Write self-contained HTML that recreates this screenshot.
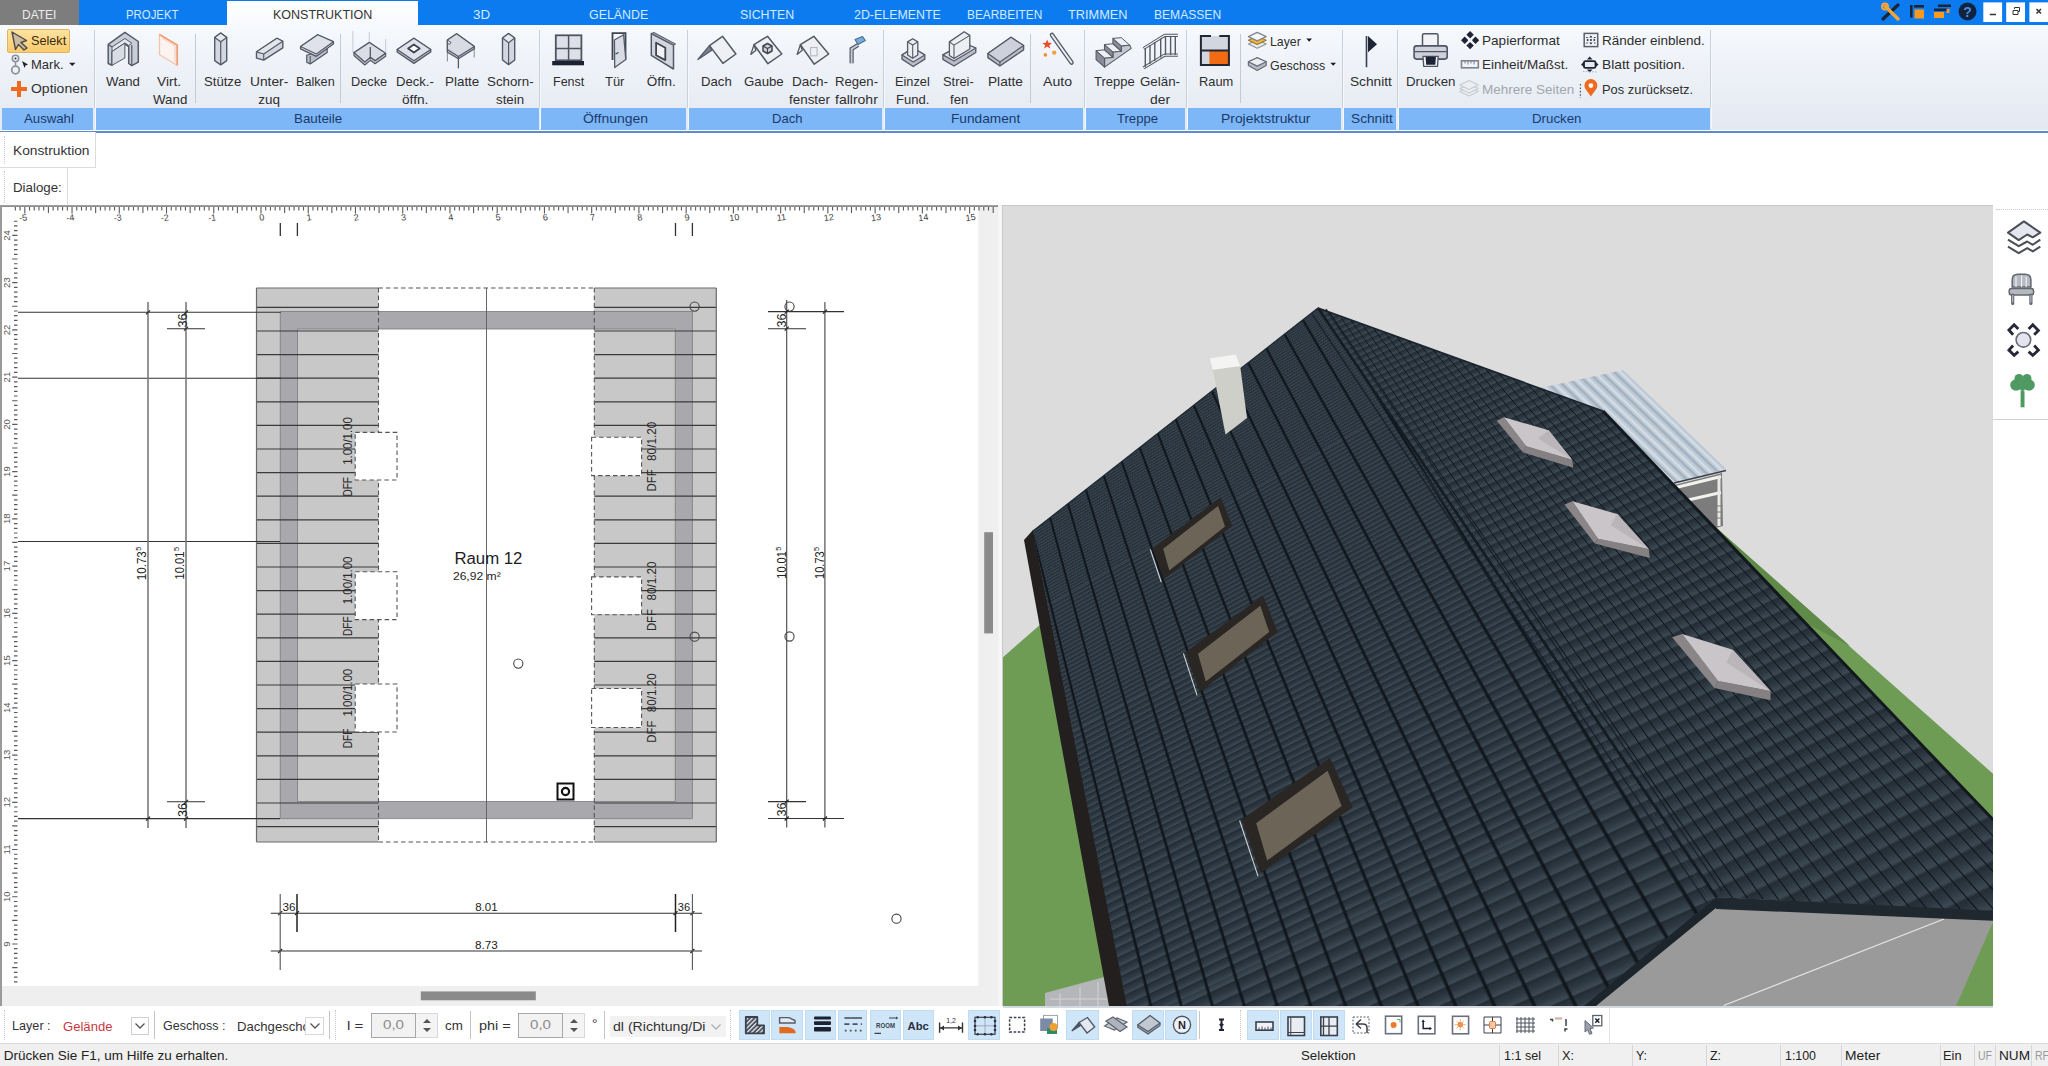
<!DOCTYPE html>
<html><head><meta charset="utf-8"><title>Konstruktion</title>
<style>
html,body{margin:0;padding:0;}
body{width:2048px;height:1066px;overflow:hidden;position:relative;background:#fff;font-family:"Liberation Sans",sans-serif;}
.abs{position:absolute;}
.t{position:absolute;white-space:nowrap;transform-origin:0 0;}
svg text{font-family:"Liberation Sans",sans-serif;}
</style></head><body>

<div class="abs" style="left:0;top:25px;width:2048px;height:105px;background:linear-gradient(#f6f9fd 0%,#eef2f8 40%,#e3e9f2 100%)"></div>
<div class="abs" style="left:0;top:130.5px;width:2048px;height:2px;background:#5b8dcc"></div>
<div class="abs" style="left:2.0px;top:108.3px;width:91.0px;height:22.2px;background:#7db7f8"></div>
<div class="t" style="left:24.25px;top:111.57px;font-size:13.5px;line-height:13.5px;color:#1a3a6a;transform:scaleX(0.9779);">Auswahl</div>
<div class="abs" style="left:96.0px;top:108.3px;width:442.6px;height:22.2px;background:#7db7f8"></div>
<div class="t" style="left:294.40px;top:111.57px;font-size:13.5px;line-height:13.5px;color:#1a3a6a;transform:scaleX(0.9880);">Bauteile</div>
<div class="abs" style="left:541.3px;top:108.3px;width:144.7px;height:22.2px;background:#7db7f8"></div>
<div class="t" style="left:582.60px;top:111.57px;font-size:13.5px;line-height:13.5px;color:#1a3a6a;transform:scaleX(1.0349);">Öffnungen</div>
<div class="abs" style="left:689.0px;top:108.3px;width:193.0px;height:22.2px;background:#7db7f8"></div>
<div class="t" style="left:772.30px;top:111.57px;font-size:13.5px;line-height:13.5px;color:#1a3a6a;transform:scaleX(0.9646);">Dach</div>
<div class="abs" style="left:885.0px;top:108.3px;width:198.0px;height:22.2px;background:#7db7f8"></div>
<div class="t" style="left:951.40px;top:111.57px;font-size:13.5px;line-height:13.5px;color:#1a3a6a;transform:scaleX(1.0133);">Fundament</div>
<div class="abs" style="left:1086.0px;top:108.3px;width:99.0px;height:22.2px;background:#7db7f8"></div>
<div class="t" style="left:1116.60px;top:111.57px;font-size:13.5px;line-height:13.5px;color:#1a3a6a;transform:scaleX(0.9698);">Treppe</div>
<div class="abs" style="left:1188.0px;top:108.3px;width:153.0px;height:22.2px;background:#7db7f8"></div>
<div class="t" style="left:1221.45px;top:111.57px;font-size:13.5px;line-height:13.5px;color:#1a3a6a;transform:scaleX(1.0284);">Projektstruktur</div>
<div class="abs" style="left:1344.0px;top:108.3px;width:52.0px;height:22.2px;background:#7db7f8"></div>
<div class="t" style="left:1350.95px;top:111.57px;font-size:13.5px;line-height:13.5px;color:#1a3a6a;transform:scaleX(1.0152);">Schnitt</div>
<div class="abs" style="left:1399.0px;top:108.3px;width:310.5px;height:22.2px;background:#7db7f8"></div>
<div class="t" style="left:1531.65px;top:111.57px;font-size:13.5px;line-height:13.5px;color:#1a3a6a;transform:scaleX(0.9847);">Drucken</div>
<div class="abs" style="left:93.8px;top:30px;width:1px;height:78px;background:#c9d0da"></div>
<div class="abs" style="left:94.8px;top:30px;width:1px;height:99px;background:#f4f7fb"></div>
<div class="abs" style="left:539.0px;top:30px;width:1px;height:78px;background:#c9d0da"></div>
<div class="abs" style="left:540.0px;top:30px;width:1px;height:99px;background:#f4f7fb"></div>
<div class="abs" style="left:687.0px;top:30px;width:1px;height:78px;background:#c9d0da"></div>
<div class="abs" style="left:688.0px;top:30px;width:1px;height:99px;background:#f4f7fb"></div>
<div class="abs" style="left:882.8px;top:30px;width:1px;height:78px;background:#c9d0da"></div>
<div class="abs" style="left:883.8px;top:30px;width:1px;height:99px;background:#f4f7fb"></div>
<div class="abs" style="left:1083.8px;top:30px;width:1px;height:78px;background:#c9d0da"></div>
<div class="abs" style="left:1084.8px;top:30px;width:1px;height:99px;background:#f4f7fb"></div>
<div class="abs" style="left:1185.7px;top:30px;width:1px;height:78px;background:#c9d0da"></div>
<div class="abs" style="left:1186.7px;top:30px;width:1px;height:99px;background:#f4f7fb"></div>
<div class="abs" style="left:1341.8px;top:30px;width:1px;height:78px;background:#c9d0da"></div>
<div class="abs" style="left:1342.8px;top:30px;width:1px;height:99px;background:#f4f7fb"></div>
<div class="abs" style="left:1397.0px;top:30px;width:1px;height:78px;background:#c9d0da"></div>
<div class="abs" style="left:1398.0px;top:30px;width:1px;height:99px;background:#f4f7fb"></div>
<div class="abs" style="left:1710.0px;top:30px;width:1px;height:78px;background:#c9d0da"></div>
<div class="abs" style="left:1711.0px;top:30px;width:1px;height:99px;background:#f4f7fb"></div>
<div class="abs" style="left:194.6px;top:34px;width:1px;height:69px;background:#c4cad3"></div>
<div class="abs" style="left:340.2px;top:34px;width:1px;height:69px;background:#c4cad3"></div>
<div class="abs" style="left:1030.0px;top:34px;width:1px;height:69px;background:#c4cad3"></div>
<div class="abs" style="left:1239.9px;top:34px;width:1px;height:69px;background:#c4cad3"></div>
<div class="abs" style="left:6.5px;top:29px;width:61px;height:22px;border:1px solid #e3b45e;border-radius:2px;background:linear-gradient(#fde2a0,#f9cc6e)"></div>
<div class="t" style="left:106.25px;top:74.87px;font-size:13.5px;line-height:13.5px;color:#2e2e2e;transform:scaleX(0.9751);">Wand</div>
<div class="t" style="left:157.35px;top:74.87px;font-size:13.5px;line-height:13.5px;color:#2e2e2e;transform:scaleX(1.0144);">Virt.</div>
<div class="t" style="left:152.85px;top:93.27px;font-size:13.5px;line-height:13.5px;color:#2e2e2e;transform:scaleX(0.9866);">Wand</div>
<div class="t" style="left:203.60px;top:74.87px;font-size:13.5px;line-height:13.5px;color:#2e2e2e;transform:scaleX(0.9720);">Stütze</div>
<div class="t" style="left:249.75px;top:74.87px;font-size:13.5px;line-height:13.5px;color:#2e2e2e;transform:scaleX(1.0211);">Unter-</div>
<div class="t" style="left:258.20px;top:93.27px;font-size:13.5px;line-height:13.5px;color:#2e2e2e;">zuq</div>
<div class="t" style="left:296.35px;top:74.87px;font-size:13.5px;line-height:13.5px;color:#2e2e2e;transform:scaleX(0.9375);">Balken</div>
<div class="t" style="left:350.55px;top:74.87px;font-size:13.5px;line-height:13.5px;color:#2e2e2e;transform:scaleX(0.9434);">Decke</div>
<div class="t" style="left:396.20px;top:74.87px;font-size:13.5px;line-height:13.5px;color:#2e2e2e;transform:scaleX(0.9691);">Deck.-</div>
<div class="t" style="left:401.50px;top:93.27px;font-size:13.5px;line-height:13.5px;color:#2e2e2e;transform:scaleX(1.0144);">öffn.</div>
<div class="t" style="left:444.65px;top:74.87px;font-size:13.5px;line-height:13.5px;color:#2e2e2e;transform:scaleX(0.9936);">Platte</div>
<div class="t" style="left:486.80px;top:74.87px;font-size:13.5px;line-height:13.5px;color:#2e2e2e;transform:scaleX(0.9858);">Schorn-</div>
<div class="t" style="left:496.15px;top:93.27px;font-size:13.5px;line-height:13.5px;color:#2e2e2e;transform:scaleX(0.9854);">stein</div>
<div class="t" style="left:553.05px;top:74.87px;font-size:13.5px;line-height:13.5px;color:#2e2e2e;transform:scaleX(0.9270);">Fenst</div>
<div class="t" style="left:605.40px;top:74.87px;font-size:13.5px;line-height:13.5px;color:#2e2e2e;transform:scaleX(0.9580);">Tür</div>
<div class="t" style="left:646.70px;top:74.87px;font-size:13.5px;line-height:13.5px;color:#2e2e2e;">Öffn.</div>
<div class="t" style="left:701.35px;top:74.87px;font-size:13.5px;line-height:13.5px;color:#2e2e2e;transform:scaleX(0.9741);">Dach</div>
<div class="t" style="left:743.65px;top:74.87px;font-size:13.5px;line-height:13.5px;color:#2e2e2e;transform:scaleX(0.9794);">Gaube</div>
<div class="t" style="left:792.00px;top:74.87px;font-size:13.5px;line-height:13.5px;color:#2e2e2e;">Dach-</div>
<div class="t" style="left:789.30px;top:93.27px;font-size:13.5px;line-height:13.5px;color:#2e2e2e;transform:scaleX(0.9934);">fenster</div>
<div class="t" style="left:835.40px;top:74.87px;font-size:13.5px;line-height:13.5px;color:#2e2e2e;transform:scaleX(0.9711);">Regen-</div>
<div class="t" style="left:835.00px;top:93.27px;font-size:13.5px;line-height:13.5px;color:#2e2e2e;transform:scaleX(1.0372);">fallrohr</div>
<div class="t" style="left:895.40px;top:74.87px;font-size:13.5px;line-height:13.5px;color:#2e2e2e;transform:scaleX(0.9464);">Einzel</div>
<div class="t" style="left:895.90px;top:93.27px;font-size:13.5px;line-height:13.5px;color:#2e2e2e;transform:scaleX(0.9675);">Fund.</div>
<div class="t" style="left:943.45px;top:74.87px;font-size:13.5px;line-height:13.5px;color:#2e2e2e;transform:scaleX(0.9518);">Strei-</div>
<div class="t" style="left:950.00px;top:93.27px;font-size:13.5px;line-height:13.5px;color:#2e2e2e;transform:scaleX(0.9698);">fen</div>
<div class="t" style="left:988.05px;top:74.87px;font-size:13.5px;line-height:13.5px;color:#2e2e2e;transform:scaleX(1.0109);">Platte</div>
<div class="t" style="left:1043.30px;top:74.87px;font-size:13.5px;line-height:13.5px;color:#2e2e2e;transform:scaleX(1.0442);">Auto</div>
<div class="t" style="left:1093.80px;top:74.87px;font-size:13.5px;line-height:13.5px;color:#2e2e2e;transform:scaleX(0.9604);">Treppe</div>
<div class="t" style="left:1139.50px;top:74.87px;font-size:13.5px;line-height:13.5px;color:#2e2e2e;transform:scaleX(0.9871);">Gelän-</div>
<div class="t" style="left:1150.00px;top:93.27px;font-size:13.5px;line-height:13.5px;color:#2e2e2e;transform:scaleX(1.0250);">der</div>
<div class="t" style="left:1198.55px;top:74.87px;font-size:13.5px;line-height:13.5px;color:#2e2e2e;transform:scaleX(0.9525);">Raum</div>
<div class="t" style="left:1350.00px;top:74.87px;font-size:13.5px;line-height:13.5px;color:#2e2e2e;transform:scaleX(1.0128);">Schnitt</div>
<div class="t" style="left:1406.00px;top:74.87px;font-size:13.5px;line-height:13.5px;color:#2e2e2e;transform:scaleX(0.9827);">Drucken</div>
<div class="t" style="left:30.80px;top:33.97px;font-size:13.5px;line-height:13.5px;color:#3b2a0c;transform:scaleX(0.9381);">Selekt</div>
<div class="t" style="left:30.80px;top:57.97px;font-size:13.5px;line-height:13.5px;color:#2e2e2e;transform:scaleX(0.9659);">Mark.</div>
<div class="t" style="left:30.80px;top:82.37px;font-size:13.5px;line-height:13.5px;color:#2e2e2e;transform:scaleX(1.0348);">Optionen</div>
<div class="t" style="left:1269.60px;top:34.57px;font-size:13.5px;line-height:13.5px;color:#2e2e2e;transform:scaleX(0.9120);">Layer</div>
<div class="t" style="left:1269.60px;top:58.57px;font-size:13.5px;line-height:13.5px;color:#2e2e2e;transform:scaleX(0.9196);">Geschoss</div>
<div class="t" style="left:1482.00px;top:34.07px;font-size:13.5px;line-height:13.5px;color:#2e2e2e;transform:scaleX(1.0054);">Papierformat</div>
<div class="t" style="left:1482.00px;top:58.27px;font-size:13.5px;line-height:13.5px;color:#2e2e2e;">Einheit/Maßst.</div>
<div class="t" style="left:1482.00px;top:82.57px;font-size:13.5px;line-height:13.5px;color:#a3a6ab;">Mehrere Seiten</div>
<div class="t" style="left:1602.00px;top:34.07px;font-size:13.5px;line-height:13.5px;color:#2e2e2e;">Ränder einblend.</div>
<div class="t" style="left:1602.00px;top:58.27px;font-size:13.5px;line-height:13.5px;color:#2e2e2e;transform:scaleX(1.0241);">Blatt position.</div>
<div class="t" style="left:1602.00px;top:82.57px;font-size:13.5px;line-height:13.5px;color:#2e2e2e;transform:scaleX(0.9561);">Pos zurücksetz.</div>
<div class="abs" style="left:0;top:0;width:2048px;height:25px;background:#0c7bf0"></div>
<div class="abs" style="left:0;top:0;width:79px;height:25px;background:#7d7d7d"></div>
<div class="abs" style="left:227px;top:1px;width:191px;height:26px;background:linear-gradient(#fefefe,#f7f9fd)"></div>
<div class="t" style="left:22.30px;top:7.57px;font-size:13.5px;line-height:13.5px;color:#ececec;transform:scaleX(0.8876);">DATEI</div>
<div class="t" style="left:126.35px;top:7.57px;font-size:13.5px;line-height:13.5px;color:#d4eaff;transform:scaleX(0.8432);">PROJEKT</div>
<div class="t" style="left:272.65px;top:7.57px;font-size:13.5px;line-height:13.5px;color:#353535;transform:scaleX(0.9258);">KONSTRUKTION</div>
<div class="t" style="left:473.45px;top:7.57px;font-size:13.5px;line-height:13.5px;color:#d4eaff;transform:scaleX(0.9909);">3D</div>
<div class="t" style="left:589.35px;top:7.57px;font-size:13.5px;line-height:13.5px;color:#d4eaff;transform:scaleX(0.9191);">GELÄNDE</div>
<div class="t" style="left:740.30px;top:7.57px;font-size:13.5px;line-height:13.5px;color:#d4eaff;transform:scaleX(0.9147);">SICHTEN</div>
<div class="t" style="left:853.60px;top:7.57px;font-size:13.5px;line-height:13.5px;color:#d4eaff;transform:scaleX(0.9183);">2D-ELEMENTE</div>
<div class="t" style="left:967.20px;top:7.57px;font-size:13.5px;line-height:13.5px;color:#d4eaff;transform:scaleX(0.8793);">BEARBEITEN</div>
<div class="t" style="left:1067.90px;top:7.57px;font-size:13.5px;line-height:13.5px;color:#d4eaff;transform:scaleX(0.9461);">TRIMMEN</div>
<div class="t" style="left:1153.95px;top:7.57px;font-size:13.5px;line-height:13.5px;color:#d4eaff;transform:scaleX(0.8944);">BEMASSEN</div>
<div class="abs" style="left:0;top:132px;width:96px;height:36px;border-right:1px solid #dcdcdc;border-bottom:1px solid #dcdcdc;box-sizing:border-box;background:#fff"></div>
<div class="abs" style="left:0;top:168px;width:68px;height:37px;border-right:1px solid #dcdcdc;box-sizing:border-box;background:#fff"></div>
<div class="abs" style="left:3.5px;top:136px;width:0;height:28px;border-left:1px dotted #c8c8c8"></div>
<div class="abs" style="left:3.5px;top:171px;width:0;height:32px;border-left:1px dotted #c8c8c8"></div>
<div class="t" style="left:12.50px;top:144.17px;font-size:13.5px;line-height:13.5px;color:#333;transform:scaleX(1.0194);">Konstruktion</div>
<div class="t" style="left:12.50px;top:180.57px;font-size:13.5px;line-height:13.5px;color:#333;transform:scaleX(0.9852);">Dialoge:</div>
<svg class="abs" style="left:0;top:0" width="2048" height="1066" viewBox="0 0 2048 1066">
<rect x="0" y="205" width="1003" height="801" fill="#efefef"/>
<rect x="2" y="206" width="976.5" height="780" fill="#ffffff"/>
<rect x="978.5" y="206" width="20" height="800" fill="#efefef"/>
<rect x="998.5" y="206" width="4" height="800" fill="#f7f7f7"/>
<rect x="984.2" y="532.2" width="8.8" height="101.2" fill="#8a8a8a"/>
<rect x="420.8" y="991.4" width="115" height="8.9" fill="#8a8a8a"/>
<rect x="0" y="205" width="2" height="801" fill="#9a9a9a"/>
<rect x="2" y="205.2" width="996" height="1.8" fill="#8e8e8e"/>
<path d="M15.35 207v3.6 M20.08 207v3.6 M24.80 207v6.5 M29.52 207v3.6 M34.25 207v3.6 M38.97 207v3.6 M43.70 207v3.6 M48.42 207v6.0 M53.14 207v3.6 M57.87 207v3.6 M62.59 207v3.6 M67.32 207v3.6 M72.04 207v6.5 M76.76 207v3.6 M81.49 207v3.6 M86.21 207v3.6 M90.94 207v3.6 M95.66 207v6.0 M100.38 207v3.6 M105.11 207v3.6 M109.83 207v3.6 M114.56 207v3.6 M119.28 207v6.5 M124.00 207v3.6 M128.73 207v3.6 M133.45 207v3.6 M138.18 207v3.6 M142.90 207v6.0 M147.62 207v3.6 M152.35 207v3.6 M157.07 207v3.6 M161.80 207v3.6 M166.52 207v6.5 M171.24 207v3.6 M175.97 207v3.6 M180.69 207v3.6 M185.42 207v3.6 M190.14 207v6.0 M194.86 207v3.6 M199.59 207v3.6 M204.31 207v3.6 M209.04 207v3.6 M213.76 207v6.5 M218.48 207v3.6 M223.21 207v3.6 M227.93 207v3.6 M232.66 207v3.6 M237.38 207v6.0 M242.10 207v3.6 M246.83 207v3.6 M251.55 207v3.6 M256.28 207v3.6 M261.00 207v6.5 M265.72 207v3.6 M270.45 207v3.6 M275.17 207v3.6 M279.90 207v3.6 M284.62 207v6.0 M289.34 207v3.6 M294.07 207v3.6 M298.79 207v3.6 M303.52 207v3.6 M308.24 207v6.5 M312.96 207v3.6 M317.69 207v3.6 M322.41 207v3.6 M327.14 207v3.6 M331.86 207v6.0 M336.58 207v3.6 M341.31 207v3.6 M346.03 207v3.6 M350.76 207v3.6 M355.48 207v6.5 M360.20 207v3.6 M364.93 207v3.6 M369.65 207v3.6 M374.38 207v3.6 M379.10 207v6.0 M383.82 207v3.6 M388.55 207v3.6 M393.27 207v3.6 M398.00 207v3.6 M402.72 207v6.5 M407.44 207v3.6 M412.17 207v3.6 M416.89 207v3.6 M421.62 207v3.6 M426.34 207v6.0 M431.06 207v3.6 M435.79 207v3.6 M440.51 207v3.6 M445.24 207v3.6 M449.96 207v6.5 M454.68 207v3.6 M459.41 207v3.6 M464.13 207v3.6 M468.86 207v3.6 M473.58 207v6.0 M478.30 207v3.6 M483.03 207v3.6 M487.75 207v3.6 M492.48 207v3.6 M497.20 207v6.5 M501.92 207v3.6 M506.65 207v3.6 M511.37 207v3.6 M516.10 207v3.6 M520.82 207v6.0 M525.54 207v3.6 M530.27 207v3.6 M534.99 207v3.6 M539.72 207v3.6 M544.44 207v6.5 M549.16 207v3.6 M553.89 207v3.6 M558.61 207v3.6 M563.34 207v3.6 M568.06 207v6.0 M572.78 207v3.6 M577.51 207v3.6 M582.23 207v3.6 M586.96 207v3.6 M591.68 207v6.5 M596.40 207v3.6 M601.13 207v3.6 M605.85 207v3.6 M610.58 207v3.6 M615.30 207v6.0 M620.02 207v3.6 M624.75 207v3.6 M629.47 207v3.6 M634.20 207v3.6 M638.92 207v6.5 M643.64 207v3.6 M648.37 207v3.6 M653.09 207v3.6 M657.82 207v3.6 M662.54 207v6.0 M667.26 207v3.6 M671.99 207v3.6 M676.71 207v3.6 M681.44 207v3.6 M686.16 207v6.5 M690.88 207v3.6 M695.61 207v3.6 M700.33 207v3.6 M705.06 207v3.6 M709.78 207v6.0 M714.50 207v3.6 M719.23 207v3.6 M723.95 207v3.6 M728.68 207v3.6 M733.40 207v6.5 M738.12 207v3.6 M742.85 207v3.6 M747.57 207v3.6 M752.30 207v3.6 M757.02 207v6.0 M761.74 207v3.6 M766.47 207v3.6 M771.19 207v3.6 M775.92 207v3.6 M780.64 207v6.5 M785.36 207v3.6 M790.09 207v3.6 M794.81 207v3.6 M799.54 207v3.6 M804.26 207v6.0 M808.98 207v3.6 M813.71 207v3.6 M818.43 207v3.6 M823.16 207v3.6 M827.88 207v6.5 M832.60 207v3.6 M837.33 207v3.6 M842.05 207v3.6 M846.78 207v3.6 M851.50 207v6.0 M856.22 207v3.6 M860.95 207v3.6 M865.67 207v3.6 M870.40 207v3.6 M875.12 207v6.5 M879.84 207v3.6 M884.57 207v3.6 M889.29 207v3.6 M894.02 207v3.6 M898.74 207v6.0 M903.46 207v3.6 M908.19 207v3.6 M912.91 207v3.6 M917.64 207v3.6 M922.36 207v6.5 M927.08 207v3.6 M931.81 207v3.6 M936.53 207v3.6 M941.26 207v3.6 M945.98 207v6.0 M950.70 207v3.6 M955.43 207v3.6 M960.15 207v3.6 M964.88 207v3.6 M969.60 207v6.5 M974.32 207v3.6 M979.05 207v3.6 M983.77 207v3.6 M988.50 207v3.6 M993.22 207v6.0" stroke="#5a5a5a" stroke-width="1.1" fill="none"/>
<g font-family="Liberation Sans"><text x="23.1" y="220.5" font-size="9" fill="#3a3a3a" transform="rotate(-8 25.6 217)" text-anchor="middle">-5</text><text x="70.3" y="220.5" font-size="9" fill="#3a3a3a" transform="rotate(-8 72.8 217)" text-anchor="middle">-4</text><text x="117.6" y="220.5" font-size="9" fill="#3a3a3a" transform="rotate(-8 120.1 217)" text-anchor="middle">-3</text><text x="164.8" y="220.5" font-size="9" fill="#3a3a3a" transform="rotate(-8 167.3 217)" text-anchor="middle">-2</text><text x="212.1" y="220.5" font-size="9" fill="#3a3a3a" transform="rotate(-8 214.6 217)" text-anchor="middle">-1</text><text x="261.8" y="220.5" font-size="9" fill="#3a3a3a" transform="rotate(-8 261.8 217)" text-anchor="middle">0</text><text x="309.0" y="220.5" font-size="9" fill="#3a3a3a" transform="rotate(-8 309.0 217)" text-anchor="middle">1</text><text x="356.3" y="220.5" font-size="9" fill="#3a3a3a" transform="rotate(-8 356.3 217)" text-anchor="middle">2</text><text x="403.5" y="220.5" font-size="9" fill="#3a3a3a" transform="rotate(-8 403.5 217)" text-anchor="middle">3</text><text x="450.8" y="220.5" font-size="9" fill="#3a3a3a" transform="rotate(-8 450.8 217)" text-anchor="middle">4</text><text x="498.0" y="220.5" font-size="9" fill="#3a3a3a" transform="rotate(-8 498.0 217)" text-anchor="middle">5</text><text x="545.2" y="220.5" font-size="9" fill="#3a3a3a" transform="rotate(-8 545.2 217)" text-anchor="middle">6</text><text x="592.5" y="220.5" font-size="9" fill="#3a3a3a" transform="rotate(-8 592.5 217)" text-anchor="middle">7</text><text x="639.7" y="220.5" font-size="9" fill="#3a3a3a" transform="rotate(-8 639.7 217)" text-anchor="middle">8</text><text x="687.0" y="220.5" font-size="9" fill="#3a3a3a" transform="rotate(-8 687.0 217)" text-anchor="middle">9</text><text x="734.2" y="220.5" font-size="9" fill="#3a3a3a" transform="rotate(-8 734.2 217)" text-anchor="middle">10</text><text x="781.4" y="220.5" font-size="9" fill="#3a3a3a" transform="rotate(-8 781.4 217)" text-anchor="middle">11</text><text x="828.7" y="220.5" font-size="9" fill="#3a3a3a" transform="rotate(-8 828.7 217)" text-anchor="middle">12</text><text x="875.9" y="220.5" font-size="9" fill="#3a3a3a" transform="rotate(-8 875.9 217)" text-anchor="middle">13</text><text x="923.2" y="220.5" font-size="9" fill="#3a3a3a" transform="rotate(-8 923.2 217)" text-anchor="middle">14</text><text x="970.4" y="220.5" font-size="9" fill="#3a3a3a" transform="rotate(-8 970.4 217)" text-anchor="middle">15</text></g>
<path d="M14 221.23h3.5 M14 225.95h3.5 M14 230.68h3.5 M12.2 235.40h5.3 M14 240.12h3.5 M14 244.85h3.5 M14 249.57h3.5 M14 254.30h3.5 M12.2 259.02h5.3 M14 263.74h3.5 M14 268.47h3.5 M14 273.19h3.5 M14 277.92h3.5 M12.2 282.64h5.3 M14 287.36h3.5 M14 292.09h3.5 M14 296.81h3.5 M14 301.54h3.5 M12.2 306.26h5.3 M14 310.98h3.5 M14 315.71h3.5 M14 320.43h3.5 M14 325.16h3.5 M12.2 329.88h5.3 M14 334.60h3.5 M14 339.33h3.5 M14 344.05h3.5 M14 348.78h3.5 M12.2 353.50h5.3 M14 358.22h3.5 M14 362.95h3.5 M14 367.67h3.5 M14 372.40h3.5 M12.2 377.12h5.3 M14 381.84h3.5 M14 386.57h3.5 M14 391.29h3.5 M14 396.02h3.5 M12.2 400.74h5.3 M14 405.46h3.5 M14 410.19h3.5 M14 414.91h3.5 M14 419.64h3.5 M12.2 424.36h5.3 M14 429.08h3.5 M14 433.81h3.5 M14 438.53h3.5 M14 443.26h3.5 M12.2 447.98h5.3 M14 452.70h3.5 M14 457.43h3.5 M14 462.15h3.5 M14 466.88h3.5 M12.2 471.60h5.3 M14 476.32h3.5 M14 481.05h3.5 M14 485.77h3.5 M14 490.50h3.5 M12.2 495.22h5.3 M14 499.94h3.5 M14 504.67h3.5 M14 509.39h3.5 M14 514.12h3.5 M12.2 518.84h5.3 M14 523.56h3.5 M14 528.29h3.5 M14 533.01h3.5 M14 537.74h3.5 M12.2 542.46h5.3 M14 547.18h3.5 M14 551.91h3.5 M14 556.63h3.5 M14 561.36h3.5 M12.2 566.08h5.3 M14 570.80h3.5 M14 575.53h3.5 M14 580.25h3.5 M14 584.98h3.5 M12.2 589.70h5.3 M14 594.42h3.5 M14 599.15h3.5 M14 603.87h3.5 M14 608.60h3.5 M12.2 613.32h5.3 M14 618.04h3.5 M14 622.77h3.5 M14 627.49h3.5 M14 632.22h3.5 M12.2 636.94h5.3 M14 641.66h3.5 M14 646.39h3.5 M14 651.11h3.5 M14 655.84h3.5 M12.2 660.56h5.3 M14 665.28h3.5 M14 670.01h3.5 M14 674.73h3.5 M14 679.46h3.5 M12.2 684.18h5.3 M14 688.90h3.5 M14 693.63h3.5 M14 698.35h3.5 M14 703.08h3.5 M12.2 707.80h5.3 M14 712.52h3.5 M14 717.25h3.5 M14 721.97h3.5 M14 726.70h3.5 M12.2 731.42h5.3 M14 736.14h3.5 M14 740.87h3.5 M14 745.59h3.5 M14 750.32h3.5 M12.2 755.04h5.3 M14 759.76h3.5 M14 764.49h3.5 M14 769.21h3.5 M14 773.94h3.5 M12.2 778.66h5.3 M14 783.38h3.5 M14 788.11h3.5 M14 792.83h3.5 M14 797.56h3.5 M12.2 802.28h5.3 M14 807.00h3.5 M14 811.73h3.5 M14 816.45h3.5 M14 821.18h3.5 M12.2 825.90h5.3 M14 830.62h3.5 M14 835.35h3.5 M14 840.07h3.5 M14 844.80h3.5 M12.2 849.52h5.3 M14 854.24h3.5 M14 858.97h3.5 M14 863.69h3.5 M14 868.42h3.5 M12.2 873.14h5.3 M14 877.86h3.5 M14 882.59h3.5 M14 887.31h3.5 M14 892.04h3.5 M12.2 896.76h5.3 M14 901.48h3.5 M14 906.21h3.5 M14 910.93h3.5 M14 915.66h3.5 M12.2 920.38h5.3 M14 925.10h3.5 M14 929.83h3.5 M14 934.55h3.5 M14 939.28h3.5 M12.2 944.00h5.3 M14 948.72h3.5 M14 953.45h3.5 M14 958.17h3.5 M14 962.90h3.5 M12.2 967.62h5.3 M14 972.34h3.5 M14 977.07h3.5 M14 981.79h3.5" stroke="#5a5a5a" stroke-width="1.2" fill="none"/>
<g><text x="0" y="0" font-size="9.5" fill="#555" text-anchor="middle" transform="translate(10.3 235.4) rotate(-90)">24</text><text x="0" y="0" font-size="9.5" fill="#555" text-anchor="middle" transform="translate(10.3 282.6) rotate(-90)">23</text><text x="0" y="0" font-size="9.5" fill="#555" text-anchor="middle" transform="translate(10.3 329.9) rotate(-90)">22</text><text x="0" y="0" font-size="9.5" fill="#555" text-anchor="middle" transform="translate(10.3 377.1) rotate(-90)">21</text><text x="0" y="0" font-size="9.5" fill="#555" text-anchor="middle" transform="translate(10.3 424.4) rotate(-90)">20</text><text x="0" y="0" font-size="9.5" fill="#555" text-anchor="middle" transform="translate(10.3 471.6) rotate(-90)">19</text><text x="0" y="0" font-size="9.5" fill="#555" text-anchor="middle" transform="translate(10.3 518.8) rotate(-90)">18</text><text x="0" y="0" font-size="9.5" fill="#555" text-anchor="middle" transform="translate(10.3 566.1) rotate(-90)">17</text><text x="0" y="0" font-size="9.5" fill="#555" text-anchor="middle" transform="translate(10.3 613.3) rotate(-90)">16</text><text x="0" y="0" font-size="9.5" fill="#555" text-anchor="middle" transform="translate(10.3 660.6) rotate(-90)">15</text><text x="0" y="0" font-size="9.5" fill="#555" text-anchor="middle" transform="translate(10.3 707.8) rotate(-90)">14</text><text x="0" y="0" font-size="9.5" fill="#555" text-anchor="middle" transform="translate(10.3 755.0) rotate(-90)">13</text><text x="0" y="0" font-size="9.5" fill="#555" text-anchor="middle" transform="translate(10.3 802.3) rotate(-90)">12</text><text x="0" y="0" font-size="9.5" fill="#555" text-anchor="middle" transform="translate(10.3 849.5) rotate(-90)">11</text><text x="0" y="0" font-size="9.5" fill="#555" text-anchor="middle" transform="translate(10.3 896.8) rotate(-90)">10</text><text x="0" y="0" font-size="9.5" fill="#555" text-anchor="middle" transform="translate(10.3 944.0) rotate(-90)">9</text></g>
<rect x="256.5" y="288.0" width="122.0" height="554.0" fill="#c8c8c8"/>
<rect x="594.3" y="288.0" width="122.0" height="554.0" fill="#c8c8c8"/>
<path d="M280.3 311.5H692.4V818.6H280.3Z M297.5 329.0V801.5H675.3V329.0Z" fill="#a9a9ad" fill-rule="evenodd"/>
<path d="M280.3 311.5H692.4V818.6H280.3Z M297.5 329.0V801.5H675.3V329.0Z" fill="none" stroke="#7a7a7e" stroke-width="0.8"/>
<path d="M256.5 307.4H378.5 M594.3 307.4H716.3 M256.5 331.0H378.5 M594.3 331.0H716.3 M256.5 354.6H378.5 M594.3 354.6H716.3 M256.5 378.2H378.5 M594.3 378.2H716.3 M256.5 401.8H378.5 M594.3 401.8H716.3 M256.5 425.4H378.5 M594.3 425.4H716.3 M256.5 449.0H378.5 M594.3 449.0H716.3 M256.5 472.6H378.5 M594.3 472.6H716.3 M256.5 496.2H378.5 M594.3 496.2H716.3 M256.5 519.8H378.5 M594.3 519.8H716.3 M256.5 543.4H378.5 M594.3 543.4H716.3 M256.5 567.0H378.5 M594.3 567.0H716.3 M256.5 590.6H378.5 M594.3 590.6H716.3 M256.5 614.2H378.5 M594.3 614.2H716.3 M256.5 637.8H378.5 M594.3 637.8H716.3 M256.5 661.4H378.5 M594.3 661.4H716.3 M256.5 685.0H378.5 M594.3 685.0H716.3 M256.5 708.6H378.5 M594.3 708.6H716.3 M256.5 732.2H378.5 M594.3 732.2H716.3 M256.5 755.8H378.5 M594.3 755.8H716.3 M256.5 779.4H378.5 M594.3 779.4H716.3 M256.5 803.0H378.5 M594.3 803.0H716.3 M256.5 826.6H378.5 M594.3 826.6H716.3" stroke="#3a3a3a" stroke-width="1.2" fill="none"/>
<path d="M256.5 288.0H378.5 M594.3 288.0H716.3 M256.5 288.0V842.0 M716.3 288.0V842.0 M256.5 842.0H378.5 M594.3 842.0H716.3" stroke="#6a6a6a" stroke-width="1.2" fill="none"/>
<path d="M378.5 288.0H594.3 M378.5 842.0H594.3 M378.5 288.0V842.0 M594.3 288.0V842.0" stroke="#555" stroke-width="1.1" stroke-dasharray="4.5 3" fill="none"/>
<path d="M486.5 288.0V842.0" stroke="#666" stroke-width="1" fill="none"/>
<rect x="355.2" y="432.4" width="41.8" height="47.6" fill="#fff" stroke="#555" stroke-width="1.1" stroke-dasharray="4.5 3"/>
<rect x="355.2" y="571.8" width="41.8" height="47.8" fill="#fff" stroke="#555" stroke-width="1.1" stroke-dasharray="4.5 3"/>
<rect x="355.2" y="684.0" width="41.8" height="48.0" fill="#fff" stroke="#555" stroke-width="1.1" stroke-dasharray="4.5 3"/>
<rect x="591.6" y="437.2" width="50.0" height="38.4" fill="#fff" stroke="#555" stroke-width="1.1" stroke-dasharray="4.5 3"/>
<rect x="591.6" y="576.9" width="50.0" height="37.8" fill="#fff" stroke="#555" stroke-width="1.1" stroke-dasharray="4.5 3"/>
<rect x="591.6" y="688.5" width="50.0" height="39.0" fill="#fff" stroke="#555" stroke-width="1.1" stroke-dasharray="4.5 3"/>
<text font-size="12" fill="#2a2a2a" textLength="19.6" lengthAdjust="spacingAndGlyphs" transform="translate(351.8 496.6) rotate(-90)">DFF</text>
<text font-size="12" fill="#2a2a2a" textLength="47.6" lengthAdjust="spacingAndGlyphs" transform="translate(351.8 464.8) rotate(-90)">1.00/1.00</text>
<text font-size="12" fill="#2a2a2a" textLength="19.6" lengthAdjust="spacingAndGlyphs" transform="translate(351.8 636.0) rotate(-90)">DFF</text>
<text font-size="12" fill="#2a2a2a" textLength="47.6" lengthAdjust="spacingAndGlyphs" transform="translate(351.8 604.2) rotate(-90)">1.00/1.00</text>
<text font-size="12" fill="#2a2a2a" textLength="19.6" lengthAdjust="spacingAndGlyphs" transform="translate(351.8 748.2) rotate(-90)">DFF</text>
<text font-size="12" fill="#2a2a2a" textLength="47.6" lengthAdjust="spacingAndGlyphs" transform="translate(351.8 716.4) rotate(-90)">1.00/1.00</text>
<text font-size="12" fill="#2a2a2a" textLength="22.0" lengthAdjust="spacingAndGlyphs" transform="translate(656.3 491.4) rotate(-90)">DFF</text>
<text font-size="12" fill="#2a2a2a" textLength="39.1" lengthAdjust="spacingAndGlyphs" transform="translate(656.3 460.9) rotate(-90)">80/1.20</text>
<text font-size="12" fill="#2a2a2a" textLength="22.0" lengthAdjust="spacingAndGlyphs" transform="translate(656.3 631.1) rotate(-90)">DFF</text>
<text font-size="12" fill="#2a2a2a" textLength="39.1" lengthAdjust="spacingAndGlyphs" transform="translate(656.3 600.6) rotate(-90)">80/1.20</text>
<text font-size="12" fill="#2a2a2a" textLength="22.0" lengthAdjust="spacingAndGlyphs" transform="translate(656.3 742.7) rotate(-90)">DFF</text>
<text font-size="12" fill="#2a2a2a" textLength="39.1" lengthAdjust="spacingAndGlyphs" transform="translate(656.3 712.2) rotate(-90)">80/1.20</text>
<text x="454.4" y="564.4" font-size="16" fill="#1e1e1e" textLength="68" lengthAdjust="spacingAndGlyphs">Raum 12</text>
<text x="452.9" y="579.5" font-size="11.5" fill="#1e1e1e" textLength="47.8" lengthAdjust="spacingAndGlyphs">26,92 m²</text>
<circle cx="694.6" cy="306.6" r="4.6" fill="none" stroke="#444" stroke-width="1.1"/>
<circle cx="694.6" cy="636.7" r="4.6" fill="none" stroke="#444" stroke-width="1.1"/>
<circle cx="518.3" cy="663.6" r="4.6" fill="none" stroke="#444" stroke-width="1.1"/>
<circle cx="789.5" cy="306.6" r="4.6" fill="none" stroke="#444" stroke-width="1.1"/>
<circle cx="789.5" cy="636.5" r="4.6" fill="none" stroke="#444" stroke-width="1.1"/>
<circle cx="896.5" cy="918.7" r="4.6" fill="none" stroke="#444" stroke-width="1.1"/>
<rect x="557.5" y="783.5" width="16" height="16" fill="#fff" stroke="#111" stroke-width="2"/>
<circle cx="565.5" cy="791.5" r="3.6" fill="none" stroke="#111" stroke-width="2.2"/>
<path d="M280.3 223V236 M297.4 223V236 M675.5 223V236 M692.4 223V236" stroke="#333" stroke-width="1.3"/>
<path d="M18 312.3H280.8 M18 378.2H280.8 M18 541.5H280 M18 818.6H280 M128 312.3H205 M167 328.7H205 M167 801.8H205 M128 818.6H205 M768 311.6H844 M768 328.7H806 M768 801.6H806 M768 818.5H844" stroke="#333" stroke-width="1.1" fill="none"/>
<path d="M148 302V828 M186 302V828" stroke="#7a7a7a" stroke-width="1.6" fill="none"/>
<path d="M786.7 300V827.5 M824.9 302V827.5" stroke="#444" stroke-width="1.1" fill="none"/>
<path d="M148.0 312.3l2 -2 M148.0 312.3l-2 2 M186.0 312.3l2 -2 M186.0 312.3l-2 2 M186.0 328.7l2 -2 M186.0 328.7l-2 2 M186.0 801.8l2 -2 M186.0 801.8l-2 2 M186.0 818.6l2 -2 M186.0 818.6l-2 2 M148.0 818.6l2 -2 M148.0 818.6l-2 2 M786.7 311.6l2 -2 M786.7 311.6l-2 2 M824.9 311.6l2 -2 M824.9 311.6l-2 2 M786.7 328.7l2 -2 M786.7 328.7l-2 2 M786.7 801.6l2 -2 M786.7 801.6l-2 2 M786.7 818.5l2 -2 M786.7 818.5l-2 2 M824.9 818.5l2 -2 M824.9 818.5l-2 2 M280.2 913.2l2 -2 M280.2 913.2l-2 2 M297.0 913.2l2 -2 M297.0 913.2l-2 2 M675.5 913.2l2 -2 M675.5 913.2l-2 2 M692.4 913.2l2 -2 M692.4 913.2l-2 2 M280.2 951.0l2 -2 M280.2 951.0l-2 2 M692.4 951.0l2 -2 M692.4 951.0l-2 2" stroke="#222" stroke-width="1.2" fill="none"/>
<g transform="translate(146.3 563.2) rotate(-90)"><text x="-17.0" y="0" font-size="12.5" fill="#222" textLength="29.0" lengthAdjust="spacingAndGlyphs">10.73</text><text x="12.4" y="-5.5" font-size="7.5" fill="#222">5</text></g>
<g transform="translate(184.0 563.0) rotate(-90)"><text x="-16.5" y="0" font-size="12.5" fill="#222" textLength="28.0" lengthAdjust="spacingAndGlyphs">10.01</text><text x="11.9" y="-5.5" font-size="7.5" fill="#222">5</text></g>
<g transform="translate(786.0 562.5) rotate(-90)"><text x="-16.2" y="0" font-size="12.5" fill="#222" textLength="27.5" lengthAdjust="spacingAndGlyphs">10.01</text><text x="11.7" y="-5.5" font-size="7.5" fill="#222">5</text></g>
<g transform="translate(824.0 562.7) rotate(-90)"><text x="-16.2" y="0" font-size="12.5" fill="#222" textLength="27.5" lengthAdjust="spacingAndGlyphs">10.73</text><text x="11.7" y="-5.5" font-size="7.5" fill="#222">5</text></g>
<text font-size="12.5" fill="#222" text-anchor="middle" textLength="14" lengthAdjust="spacingAndGlyphs" transform="translate(186.5 320.5) rotate(-90)">36</text>
<text font-size="12.5" fill="#222" text-anchor="middle" textLength="14" lengthAdjust="spacingAndGlyphs" transform="translate(186.5 810.0) rotate(-90)">36</text>
<text font-size="12.5" fill="#222" text-anchor="middle" textLength="14" lengthAdjust="spacingAndGlyphs" transform="translate(786.2 320.5) rotate(-90)">36</text>
<text font-size="12.5" fill="#222" text-anchor="middle" textLength="14" lengthAdjust="spacingAndGlyphs" transform="translate(786.2 809.5) rotate(-90)">36</text>
<path d="M270.8 913.2H702 M270.8 951H702" stroke="#333" stroke-width="1.1" fill="none"/>
<path d="M280.2 894V970 M692.4 894V970" stroke="#555" stroke-width="1.1" fill="none"/>
<path d="M297 894V932 M675.5 894V932" stroke="#222" stroke-width="1.5" fill="none"/>
<text x="486.4" y="910.8" font-size="11.8" fill="#222" text-anchor="middle" textLength="22.4" lengthAdjust="spacingAndGlyphs">8.01</text>
<text x="486.4" y="948.5" font-size="11.8" fill="#222" text-anchor="middle" textLength="22.8" lengthAdjust="spacingAndGlyphs">8.73</text>
<text x="282.5" y="910.8" font-size="11.8" fill="#222" textLength="13" lengthAdjust="spacingAndGlyphs">36</text>
<text x="677.8" y="910.8" font-size="11.8" fill="#222" textLength="12.3" lengthAdjust="spacingAndGlyphs">36</text>
<defs>
<clipPath id="v3"><rect x="1003" y="205" width="990" height="801"/></clipPath>
<clipPath id="lf"><polygon points="1033.0,531.0 1318.0,308.0 1716.0,897.0 1588.0,1006.0 1127.0,1006.0"/></clipPath>
<clipPath id="rf"><polygon points="1318.0,308.0 1603.0,411.0 2000.0,827.0 2000.0,912.0 1716.0,897.0"/></clipPath>
<pattern id="tl" width="4.6" height="4.6" patternUnits="userSpaceOnUse" patternTransform="rotate(-36)"><rect width="4.6" height="4.6" fill="#2d3a46"/><rect width="4.6" height="1.5" fill="#3e4d5a"/><rect y="3.4" width="4.6" height="1" fill="#222d37"/></pattern>
<pattern id="tr" width="5" height="5" patternUnits="userSpaceOnUse" patternTransform="rotate(14)"><rect width="5" height="5" fill="#2e3b47"/><rect width="5" height="1.5" fill="#3d4c59"/><rect y="3.8" width="5" height="1" fill="#222d37"/></pattern>
<pattern id="corr" width="9" height="9" patternUnits="userSpaceOnUse" patternTransform="rotate(44)"><rect width="9" height="9" fill="#bfcbd6"/><rect width="9" height="2.4" fill="#a2b1bf"/><rect y="5" width="9" height="2.2" fill="#d5dee6"/></pattern>
</defs>
<g clip-path="url(#v3)">
<rect x="1003" y="205" width="990" height="801" fill="#dcdcdc"/>
<polygon points="1002,658 1041,624 1112,1006 1002,1006" fill="#6f9c55"/>
<polygon points="1045,993 1108,976 1112,1006 1045,1006" fill="#b5b6ba"/>
<path d="M1050 999H1108 M1060 993V1006 M1080 987V1006 M1098 982V1006" stroke="#d2d3d6" stroke-width="1"/>
<polygon points="1712,524 2000,780 2000,830 1712,527" fill="#6f9c55"/>
<polygon points="1712,524 1850,646 1780,610 1712,550" fill="#5f8a48"/>
<polygon points="1716,905 2000,916 2000,1006 1588,1006" fill="#9a9a9a"/>
<polygon points="1993,922 1993,1006 1956,1006" fill="#6f9c55"/>
<path d="M1723.6 1005.5L1944 919" stroke="#e6e6e6" stroke-width="1.2"/>
<polygon points="1540,388 1623,370 1726,469 1676,483 1600,412" fill="url(#corr)"/>
<path d="M1674 483L1726 470.5" stroke="#3a4148" stroke-width="1.5"/>
<polygon points="1674,485 1722,473 1723,526 1716,528" fill="#7c7c7c"/>
<path d="M1676 487.5L1721 476.5 M1688 500L1721 492.5" stroke="#f2f2ee" stroke-width="3"/>
<path d="M1719 476V526" stroke="#e8e8e4" stroke-width="3"/>
<path d="M1700 506H1721 M1704 512H1721 M1708 518H1721" stroke="#7a7a7a" stroke-width="1"/>
<polygon points="1024,540 1033,530 1128,1006 1109,1006" fill="#231f1f"/>
<polygon points="1033.0,531.0 1318.0,308.0 1716.0,897.0 1588.0,1006.0 1127.0,1006.0" fill="#2c3740"/>
<polygon points="1318.0,308.0 1603.0,411.0 2000.0,827.0 2000.0,912.0 1716.0,897.0" fill="#2c3740"/>
</g>

</svg>
<div class="abs" style="left:0;top:0;width:2048px;height:1066px;overflow:hidden;clip-path:polygon(1033.0px 531.0px,1318.0px 308.0px,1716.0px 897.0px,1588.0px 1006.0px,1127.0px 1006.0px)"><div style="position:absolute;left:0;top:0;width:1962.4px;height:919.3px;transform-origin:0 0;transform:matrix3d(0.2405545543,-0.205347751,0,0.0003245081687,0.4826180255,-0.4091602439,0,-0.0001150154644,0,0,1,0,1136.373844,1222.248343,0,1);background:repeating-linear-gradient(0deg, rgba(14,20,26,0) 0px, rgba(14,20,26,.9) 2px, #0e141a 3.5px, rgba(14,20,26,.7) 5px, rgba(14,20,26,0) 7px, rgba(0,0,0,0) 48px) 0 0/100% 100% no-repeat,repeating-linear-gradient(90deg, #3d4953 0px, #36424c 4.69px, #2d3842 10.94px, #27313a 18.75px, #222b33 22.66px, #3d4953 25.00px) -548.8px 0/885.3px 100% no-repeat,repeating-linear-gradient(90deg, #3d4953 0px, #36424c 3.75px, #2d3842 8.75px, #27313a 15.00px, #222b33 18.12px, #3d4953 20.00px) 336.5px 0/356.4px 100% no-repeat,repeating-linear-gradient(90deg, #3d4953 0px, #36424c 3.00px, #2d3842 7.00px, #27313a 12.00px, #222b33 14.50px, #3d4953 16.00px) 693.0px 0/356.4px 100% no-repeat,repeating-linear-gradient(90deg, #3d4953 0px, #36424c 2.44px, #2d3842 5.69px, #27313a 9.75px, #222b33 11.78px, #3d4953 13.00px) 1049.4px 0/408.2px 100% no-repeat,repeating-linear-gradient(90deg, #3d4953 0px, #36424c 1.97px, #2d3842 4.59px, #27313a 7.88px, #222b33 9.52px, #3d4953 10.50px) 1457.6px 0/408.2px 100% no-repeat,repeating-linear-gradient(90deg, #3d4953 0px, #36424c 1.69px, #2d3842 3.94px, #27313a 6.75px, #222b33 8.16px, #3d4953 9.00px) 1865.7px 0/1226.4px 100% no-repeat,#2d3842;"></div></div>
<div class="abs" style="left:0;top:0;width:2048px;height:1066px;overflow:hidden;clip-path:polygon(1318.0px 308.0px,1603.0px 411.0px,2000.0px 827.0px,2000.0px 912.0px,1716.0px 897.0px)"><div style="position:absolute;left:0;top:0;width:941.1px;height:966.7px;transform-origin:0 0;transform:matrix3d(0.1602451239,-0.06362029085,0,9.403003477e-06,-0.4736905157,0.2001054848,0,-0.0005486244783,0,0,1,0,1306.100404,301.8026929,0,1);background:repeating-linear-gradient(90deg, rgba(14,20,26,0) 0px, rgba(14,20,26,.9) 2px, #0e141a 3px, rgba(14,20,26,.7) 4.5px, rgba(14,20,26,0) 6px, rgba(0,0,0,0) 40px),repeating-linear-gradient(0deg, #3d4953 0px, #36424c 2.5px, #2d3842 5.5px, #27313a 9px, #222b33 11px, #3d4953 12px);"></div></div>
<svg class="abs" style="left:0;top:0" width="2048" height="1066" viewBox="0 0 2048 1066">

<g clip-path="url(#v3)">
<path d="M1318 308L1716 897" stroke="#151d24" stroke-width="2"/>
<path d="M1312 314L1707 903 M1326 309L1722 891" stroke="#18212a" stroke-width="1.3" opacity="0.8"/>
<path d="M1315 311L1711 900 M1322 309L1719 894" stroke="#3c4954" stroke-width="1" opacity="0.6"/>
<path d="M1603 411L2000 827" stroke="#12181d" stroke-width="3"/>
<path d="M1318 308L1603 411" stroke="#1b242c" stroke-width="1.5"/>
<path d="M1033 531L1318 308" stroke="#1f2a33" stroke-width="1.2"/>
<polygon points="1716,897 2000,911 2000,921 1716,909" fill="#1f282f"/>
<polygon points="1716,897 1722,903 1596,1006 1584,1006" fill="#1c252c"/>
<polygon points="1212.8,369.8 1240.2,366 1247,418 1225.5,434.4" fill="#cfcfca"/>
<polygon points="1209.8,358.4 1235.6,354.6 1240.2,366 1212.8,369.8" fill="#f4f4f2"/>
<polygon points="1152.3,548.5 1220.8,497.3 1232.3,526.0 1163.8,579.2" fill="#2a2624"/>
<polygon points="1163.2,548.8 1218.1,505.9 1225.0,526.6 1169.3,570.4" fill="#6c6557"/>
<path d="M1150.3 549.5L1161.3 582.2" stroke="#cfd2d6" stroke-width="1.1"/>
<polygon points="1185.4,652.3 1263.0,595.4 1277.7,632.0 1199.6,692.3" fill="#2a2624"/>
<polygon points="1198.0,653.7 1260.3,605.7 1269.2,632.0 1205.8,681.6" fill="#6c6557"/>
<path d="M1183.4 653.3L1197.1 695.3" stroke="#cfd2d6" stroke-width="1.1"/>
<polygon points="1241.6,819.5 1330.0,757.9 1352.6,807.3 1260.5,873.2" fill="#2a2624"/>
<polygon points="1256.2,823.2 1327.6,770.7 1341.6,806.1 1267.2,860.5" fill="#6c6557"/>
<path d="M1239.6 820.5L1258.0 876.2" stroke="#cfd2d6" stroke-width="1.1"/>
<polygon points="1496.7,420.7 1503.9,417.2 1526.3,446.3 1523.1,452.6" fill="#8a8687"/>
<polygon points="1523.1,452.6 1526.3,446.3 1572.2,459.8 1573.3,467.8" fill="#858182"/>
<polygon points="1503.9,417.2 1548.6,430.3 1572.2,459.8 1526.3,446.3" fill="#c9c5c9"/>
<polygon points="1548.6,430.3 1572.2,459.8 1538.1,438.5" fill="#b9b5b9"/>
<polygon points="1564.5,504.5 1572.5,501.3 1598.0,538.8 1594.8,543.5" fill="#8a8687"/>
<polygon points="1594.8,543.5 1598.0,538.8 1648.7,549.1 1649.9,557.9" fill="#858182"/>
<polygon points="1572.5,501.3 1617.2,514.0 1648.7,549.1 1598.0,538.8" fill="#c9c5c9"/>
<polygon points="1617.2,514.0 1648.7,549.1 1610.6,525.2" fill="#b9b5b9"/>
<polygon points="1672.1,637.3 1682.2,634.0 1718.1,681.0 1714.4,687.9" fill="#8a8687"/>
<polygon points="1714.4,687.9 1718.1,681.0 1770.5,691.1 1770.5,700.3" fill="#858182"/>
<polygon points="1682.2,634.0 1732.8,649.7 1770.5,691.1 1718.1,681.0" fill="#c9c5c9"/>
<polygon points="1732.8,649.7 1770.5,691.1 1726.3,662.5" fill="#b9b5b9"/>
</g>
<rect x="1002.5" y="205.5" width="991" height="801" fill="none" stroke="#c8c8c8" stroke-width="1"/>
</svg>
<div class="abs" style="left:1993px;top:205px;width:55px;height:801px;background:#fff"></div>
<div class="abs" style="left:1996px;top:209px;width:52px;height:0;border-top:1px dotted #c8c8c8"></div>
<div class="abs" style="left:1993px;top:419px;width:55px;height:1px;background:#d0d0d0"></div>
<svg class="abs" style="left:0;top:0" width="2048" height="1066"><path d="M2008 232.6 L2023.9 221.4 L2040.3 232.6 L2032.8 237.3 L2027.2 234.5 L2018.7 240.1 Z" fill="#e6e6ef" stroke="#4a4f5a" stroke-width="2" stroke-linejoin="round"/><path d="M2008 239.6 L2018.7 246.2 L2027.2 241.5 L2032.8 244.8 L2040.3 239.6 M2008 246.6 L2018.7 253.2 L2027.2 248.1 L2032.8 251.4 L2040.3 246.6" fill="none" stroke="#4a4f5a" stroke-width="2" stroke-linejoin="round"/><path d="M2012.2 287 V280 Q2012.2 274.3 2018 274.3 H2025 Q2030.9 274.3 2030.9 280 V287 Z" fill="#b6b8c0" stroke="#62666f" stroke-width="1.5"/><path d="M2016 276.5V287 M2021.6 275.5V287 M2026.2 276.5V287" stroke="#eef0f3" stroke-width="1.2"/><rect x="2009.2" y="288.5" width="24.4" height="6.5" rx="2.5" fill="#b6b8c0" stroke="#62666f" stroke-width="1.5"/><path d="M2012.7 295V303.5 M2030.9 295V303.5" stroke="#62666f" stroke-width="3.2" stroke-linecap="round"/><path d="M2012.7 295V302.5 M2030.9 295V302.5" stroke="#b6b8c0" stroke-width="1.2"/><circle cx="2023.4" cy="339.8" r="7.3" fill="#e4e4ee" stroke="#6a6c75" stroke-width="1.6"/><path d="M2018.3 329.1 L2014.1 324.8 L2008.9 330 L2013.1 334.7 M2028.6 329.1 L2032.8 324.8 L2038.4 330.5 L2034.2 334.7 M2013.1 345.5 L2008.9 350.1 L2014.1 355.3 L2018.3 351.6 M2034.2 345.5 L2038.4 350.1 L2032.8 355.3 L2028.6 351.6" fill="none" stroke="#252836" stroke-width="2.8" stroke-linejoin="miter"/><g fill="#4e9a62"><circle cx="2016" cy="385" r="5.8"/><circle cx="2029" cy="385" r="5.8"/><circle cx="2019" cy="378.5" r="4.5"/><circle cx="2027" cy="378.5" r="4.5"/><circle cx="2022.5" cy="384" r="6.5"/><rect x="2020.6" y="388" width="3.9" height="19.3"/></g><circle cx="2020.5" cy="390.5" r="0.9" fill="#cfe6d5"/><circle cx="2024.5" cy="390.5" r="0.9" fill="#cfe6d5"/></svg>
<div class="abs" style="left:0;top:1006px;width:2048px;height:37px;background:#ffffff"></div>
<div class="abs" style="left:0;top:1043px;width:2048px;height:23px;background:#f0f0f0;border-top:1px solid #dadada;box-sizing:border-box"></div>
<div class="abs" style="left:1609px;top:1006px;width:1px;height:37px;background:#e2e2e2"></div>
<div class="abs" style="left:1003px;top:1006px;width:990px;height:1.6px;background:#d3d9df"></div>
<div class="t" style="left:12.20px;top:1019.07px;font-size:13.5px;line-height:13.5px;color:#333;transform:scaleX(0.9353);">Layer :</div>
<div class="t" style="left:62.70px;top:1019.57px;font-size:13.5px;line-height:13.5px;color:#c8383f;transform:scaleX(0.9698);">Gelände</div>
<div class="abs" style="left:130.8px;top:1016.8px;width:18.5px;height:17.8px;border:1px solid #d0d0d0;box-sizing:border-box;background:#fff"></div>
<div class="t" style="left:163.00px;top:1019.07px;font-size:13.5px;line-height:13.5px;color:#333;transform:scaleX(0.9256);">Geschoss :</div>
<div class="abs" style="left:237.4px;top:1014px;width:68px;height:24px;overflow:hidden"><div class="t" style="left:0.00px;top:6.07px;font-size:13.5px;line-height:13.5px;color:#333;transform:scaleX(0.9712);">Dachgeschoss</div></div>
<div class="abs" style="left:304.7px;top:1016.5px;width:19.8px;height:18px;border:1px solid #d8d8d8;box-sizing:border-box;background:#fff"></div>
<div class="abs" style="left:154.4px;top:1011px;width:1px;height:28px;background:#c4c4c4"></div>
<div class="abs" style="left:328.8px;top:1011px;width:1px;height:28px;background:#c4c4c4"></div>
<div class="abs" style="left:469.8px;top:1011px;width:1px;height:28px;background:#c4c4c4"></div>
<div class="abs" style="left:603.6px;top:1011px;width:1px;height:28px;background:#c4c4c4"></div>
<div class="abs" style="left:4px;top:1010px;width:0;height:30px;border-left:1px dotted #c8c8c8"></div>
<div class="abs" style="left:335px;top:1010px;width:0;height:30px;border-left:1px dotted #c8c8c8"></div>
<div class="abs" style="left:729.7px;top:1010px;width:0;height:30px;border-left:1px dotted #c8c8c8"></div>
<div class="abs" style="left:1240px;top:1010px;width:0;height:30px;border-left:1px dotted #c8c8c8"></div>
<div class="t" style="left:346.60px;top:1019.07px;font-size:13.5px;line-height:13.5px;color:#333;transform:scaleX(1.1207);">l =</div>
<div class="t" style="left:444.90px;top:1019.07px;font-size:13.5px;line-height:13.5px;color:#333;transform:scaleX(0.9891);">cm</div>
<div class="t" style="left:478.70px;top:1019.07px;font-size:13.5px;line-height:13.5px;color:#333;transform:scaleX(1.0691);">phi =</div>
<div class="t" style="left:592.00px;top:1016.57px;font-size:13.5px;line-height:13.5px;color:#333;">°</div>
<div class="abs" style="left:371.3px;top:1012.5px;width:44.4px;height:25px;border:1px solid #a8a8a8;box-sizing:border-box;background:#f2f2f2"></div>
<div class="abs" style="left:415.7px;top:1012.5px;width:22px;height:25px;border:1px solid #d8d8d8;border-left:none;box-sizing:border-box;background:#f4f4f4"></div>
<div class="t" style="left:383.00px;top:1017.57px;font-size:13.5px;line-height:13.5px;color:#8c8c8c;transform:scaleX(1.1190);">0,0</div>
<svg class="abs" style="left:415.7px;top:1012.5px" width="22" height="25"><path d="M7 10L11 6L15 10Z M7 15L11 19L15 15Z" fill="#555"/></svg>
<div class="abs" style="left:518.3px;top:1012.5px;width:44.4px;height:25px;border:1px solid #a8a8a8;box-sizing:border-box;background:#f2f2f2"></div>
<div class="abs" style="left:562.7px;top:1012.5px;width:22px;height:25px;border:1px solid #d8d8d8;border-left:none;box-sizing:border-box;background:#f4f4f4"></div>
<div class="t" style="left:530.00px;top:1017.57px;font-size:13.5px;line-height:13.5px;color:#8c8c8c;transform:scaleX(1.1190);">0,0</div>
<svg class="abs" style="left:562.7px;top:1012.5px" width="22" height="25"><path d="M7 10L11 6L15 10Z M7 15L11 19L15 15Z" fill="#555"/></svg>
<div class="abs" style="left:610.4px;top:1015.7px;width:115.6px;height:21px;background:#f2f2f2"></div>
<div class="t" style="left:612.80px;top:1019.57px;font-size:13.5px;line-height:13.5px;color:#333;transform:scaleX(1.0448);">dl (Richtung/Di</div>
<svg class="abs" style="left:134.2px;top:1022.0px" width="12" height="8"><path d="M1.5 1.5L6 6L10.5 1.5" fill="none" stroke="#555" stroke-width="1.3"/></svg>
<svg class="abs" style="left:308.5px;top:1022.0px" width="12" height="8"><path d="M1.5 1.5L6 6L10.5 1.5" fill="none" stroke="#555" stroke-width="1.3"/></svg>
<svg class="abs" style="left:709.5px;top:1022.5px" width="12" height="8"><path d="M1.5 1.5L6 6L10.5 1.5" fill="none" stroke="#b0b0b0" stroke-width="1.3"/></svg>
<div class="abs" style="left:738.6px;top:1009.6px;width:31.3px;height:30.4px;background:#cfe6f9;border:1px solid #c0dcf3;box-sizing:border-box"></div>
<div class="abs" style="left:771.0px;top:1009.6px;width:32.0px;height:30.4px;background:#cfe6f9;border:1px solid #c0dcf3;box-sizing:border-box"></div>
<div class="abs" style="left:804.7px;top:1009.6px;width:31.2px;height:30.4px;background:#cfe6f9;border:1px solid #c0dcf3;box-sizing:border-box"></div>
<div class="abs" style="left:837.7px;top:1009.6px;width:29.8px;height:30.4px;background:#cfe6f9;border:1px solid #c0dcf3;box-sizing:border-box"></div>
<div class="abs" style="left:869.8px;top:1009.6px;width:31.4px;height:30.4px;background:#cfe6f9;border:1px solid #c0dcf3;box-sizing:border-box"></div>
<div class="abs" style="left:903.0px;top:1009.6px;width:30.5px;height:30.4px;background:#cfe6f9;border:1px solid #c0dcf3;box-sizing:border-box"></div>
<div class="abs" style="left:968.0px;top:1009.6px;width:31.5px;height:30.4px;background:#cfe6f9;border:1px solid #c0dcf3;box-sizing:border-box"></div>
<div class="abs" style="left:1066.3px;top:1009.6px;width:32.4px;height:30.4px;background:#cfe6f9;border:1px solid #c0dcf3;box-sizing:border-box"></div>
<div class="abs" style="left:1132.0px;top:1009.6px;width:32.3px;height:30.4px;background:#cfe6f9;border:1px solid #c0dcf3;box-sizing:border-box"></div>
<div class="abs" style="left:1164.8px;top:1009.6px;width:32.4px;height:30.4px;background:#cfe6f9;border:1px solid #c0dcf3;box-sizing:border-box"></div>
<div class="abs" style="left:1247.0px;top:1009.6px;width:31.5px;height:30.4px;background:#cfe6f9;border:1px solid #c0dcf3;box-sizing:border-box"></div>
<div class="abs" style="left:1280.0px;top:1009.6px;width:31.5px;height:30.4px;background:#cfe6f9;border:1px solid #c0dcf3;box-sizing:border-box"></div>
<div class="abs" style="left:1313.0px;top:1009.6px;width:31.9px;height:30.4px;background:#cfe6f9;border:1px solid #c0dcf3;box-sizing:border-box"></div>
<div class="abs" style="left:1199.2px;top:1011px;width:1px;height:28px;background:#c4c4c4"></div>
<div class="t" style="left:3.80px;top:1049.07px;font-size:13.5px;line-height:13.5px;color:#222;">Drücken Sie F1, um Hilfe zu erhalten.</div>
<div class="t" style="left:1300.80px;top:1049.07px;font-size:13.5px;line-height:13.5px;color:#222;transform:scaleX(0.9849);">Selektion</div>
<div class="abs" style="left:1499.0px;top:1045px;width:1px;height:21px;background:#d6d6d6"></div>
<div class="abs" style="left:1557.9px;top:1045px;width:1px;height:21px;background:#d6d6d6"></div>
<div class="abs" style="left:1632.3px;top:1045px;width:1px;height:21px;background:#d6d6d6"></div>
<div class="abs" style="left:1706.2px;top:1045px;width:1px;height:21px;background:#d6d6d6"></div>
<div class="abs" style="left:1780.2px;top:1045px;width:1px;height:21px;background:#d6d6d6"></div>
<div class="abs" style="left:1840.7px;top:1045px;width:1px;height:21px;background:#d6d6d6"></div>
<div class="abs" style="left:1939.5px;top:1045px;width:1px;height:21px;background:#d6d6d6"></div>
<div class="abs" style="left:1973.7px;top:1045px;width:1px;height:21px;background:#d6d6d6"></div>
<div class="abs" style="left:1994.6px;top:1045px;width:1px;height:21px;background:#d6d6d6"></div>
<div class="abs" style="left:2031.0px;top:1045px;width:1px;height:21px;background:#d6d6d6"></div>
<div class="t" style="left:1503.80px;top:1049.07px;font-size:13.5px;line-height:13.5px;color:#222;transform:scaleX(0.9302);">1:1 sel</div>
<div class="t" style="left:1561.80px;top:1049.07px;font-size:13.5px;line-height:13.5px;color:#222;transform:scaleX(0.9408);">X:</div>
<div class="t" style="left:1636.30px;top:1049.07px;font-size:13.5px;line-height:13.5px;color:#222;transform:scaleX(0.9158);">Y:</div>
<div class="t" style="left:1710.00px;top:1049.07px;font-size:13.5px;line-height:13.5px;color:#222;transform:scaleX(0.9169);">Z:</div>
<div class="t" style="left:1785.00px;top:1049.07px;font-size:13.5px;line-height:13.5px;color:#222;transform:scaleX(0.9176);">1:100</div>
<div class="t" style="left:1844.70px;top:1049.07px;font-size:13.5px;line-height:13.5px;color:#222;transform:scaleX(1.0229);">Meter</div>
<div class="t" style="left:1943.00px;top:1049.07px;font-size:13.5px;line-height:13.5px;color:#222;transform:scaleX(0.9481);">Ein</div>
<div class="t" style="left:1978.00px;top:1049.07px;font-size:13.5px;line-height:13.5px;color:#9a9a9a;transform:scaleX(0.7779);">UF</div>
<div class="t" style="left:1999.00px;top:1049.07px;font-size:13.5px;line-height:13.5px;color:#222;transform:scaleX(1.0083);">NUM</div>
<div class="t" style="left:2035.00px;top:1049.07px;font-size:13.5px;line-height:13.5px;color:#9a9a9a;transform:scaleX(0.7779);">RF</div>
<svg class="abs" style="left:0;top:0" width="2048" height="140"><path d="M12 32 L26.5 40.5 L21 42.5 L27 48 L24 50 L18.5 44.5 L15.5 49.5 Z" fill="#cbbba3" stroke="#4e4a44" stroke-width="1.4" stroke-linejoin="round" /><circle cx="15.5" cy="58.5" r="3.2" fill="none" stroke="#8d929c" stroke-width="1.6"/><circle cx="15.5" cy="58.5" r="1" fill="#333"/><circle cx="15.5" cy="70" r="3.8" fill="none" stroke="#8d929c" stroke-width="1.8"/><path d="M15.5 61.7V66.2" stroke="#8d929c" stroke-width="1.4"/><path d="M22 61 L28 64.5 L25.5 65.5 L24.5 68 Z" fill="#222"/><path d="M69 62.7H75.5L72.25 66Z" fill="#222"/><path d="M19 81V97 M11 89H27" stroke="#f06a1f" stroke-width="4"/><path d="M108.2 44.4 L124.9 32.4 L138.3 41.5 L138.3 62.2 L131.8 65.6 L128.7 63.5 L128.7 46.5 L124.9 44 L112 52 L112 65.3 L108.2 63.5 Z" fill="#c9cdd8" stroke="#545a66" stroke-width="1.5" stroke-linejoin="round" /><path d="M112 47 L124.9 38.5 L131.8 43.2 L128.7 45.5 L124.9 43 L112 51.5 Z" fill="#e4e7ee" stroke="#545a66" stroke-width="1.0" stroke-linejoin="round" /><path d="M112 51.5 L124.9 43 L124.9 58 L112 65.3 Z" fill="#d8dce5" stroke="#545a66" stroke-width="1.0" stroke-linejoin="round" /><path d="M131.8 45V65.6 M108.2 44.4 L112 47" stroke="#545a66" stroke-width="1.2" fill="none"/><path d="M159.5 34.5 L177.2 45.1 L177.2 65.3 L159.5 54.7 Z" fill="#fbf3ef" stroke="#f3c4ab" stroke-width="1.3"/><path d="M159.5 34.5 L177.2 45.1 L177.2 65.3" fill="none" stroke="#eea27d" stroke-width="1.8"/><path d="M162 38 L175 45.8 L175 62" fill="none" stroke="#f4c9b4" stroke-width="1"/><path d="M214.7 37.4 L220.7 33.1 L226.7 37.4 L226.7 60.6 L220.7 64.9 L214.7 60.6 Z" fill="#d3d7e1" stroke="#545a66" stroke-width="1.4" stroke-linejoin="round" /><path d="M214.7 37.4 L220.7 33.1 L226.7 37.4 L220.7 41.7 Z" fill="#e6e9ef" stroke="#545a66" stroke-width="1.2" stroke-linejoin="round" /><path d="M220.7 41.7V64.9" stroke="#545a66" stroke-width="1.2"/><path d="M502.5 38.1 L508.6 33.5 L514.7 38.1 L514.7 60.0 L508.6 64.6 L502.5 60.0 Z" fill="#d3d7e1" stroke="#545a66" stroke-width="1.4" stroke-linejoin="round" /><path d="M502.5 38.1 L508.6 33.5 L514.7 38.1 L508.6 42.7 Z" fill="#e6e9ef" stroke="#545a66" stroke-width="1.2" stroke-linejoin="round" /><path d="M508.6 42.7V64.6" stroke="#545a66" stroke-width="1.2"/><path d="M256.5 51.9 L277 38.3 L282.8 41.3 L282.8 47.8 L263.7 60.1 L256.5 58.1 Z" fill="#d3d7e1" stroke="#545a66" stroke-width="1.4" stroke-linejoin="round" /><path d="M256.5 51.9 L277 38.3 L282.8 41.3 L263.7 54 Z" fill="#e3e6ed" stroke="#545a66" stroke-width="1.1" stroke-linejoin="round" /><path d="M263.7 54V60.1" stroke="#545a66" stroke-width="1.1"/><path d="M306.7 55.3 V62.2 L310.2 63.9 L327.2 52.6 V49 Z" fill="#b9bec9" stroke="#545a66" stroke-width="1.2" stroke-linejoin="round" /><path d="M300.6 46.5 L317.7 34.8 L333.4 41.7 V44 L316.3 56.3 L300.6 48.8 Z" fill="#d3d7e1" stroke="#545a66" stroke-width="1.4" stroke-linejoin="round" /><path d="M300.6 46.5 L317.7 34.8 L333.4 41.7 L316.3 54 Z" fill="#dfe2ea" stroke="#545a66" stroke-width="1.1" stroke-linejoin="round" /><path d="M310.2 56V63.9" stroke="#545a66" stroke-width="1.1"/><path d="M353.9 52.6 L369.3 42.4 L385.7 53.3 L375.1 60.8 L370.3 57.4 L364.8 62.2 Z" fill="#dadde6" stroke="#545a66" stroke-width="1.3" stroke-linejoin="round" /><path d="M353.9 52.6 V55.5 L364.8 65 L370.3 60.3 L375.1 63.7 L385.7 56.2 V53.3 L375.1 60.8 L370.3 57.4 L364.8 62.2 Z" fill="#b9bec9" stroke="#545a66" stroke-width="1.1" stroke-linejoin="round" /><path d="M352.9 31V53 M369.3 32V42 M385.7 39V53" stroke="#b4b9c3" stroke-width="0.7"/><path d="M370.3 47V58" stroke="#545a66" stroke-width="1.3"/><path d="M397.2 49.5 L413.9 38.3 L430.7 49.5 V52 L413.9 63.3 L397.2 52 Z" fill="#b9bec9" stroke="#545a66" stroke-width="1.4" stroke-linejoin="round" /><path d="M397.2 49.5 L413.9 38.3 L430.7 49.5 L413.9 60.8 Z" fill="#dfe2ea" stroke="#545a66" stroke-width="1.2" stroke-linejoin="round" /><path d="M408.1 48.5 L413.9 44.5 L419.7 48.5 L413.9 52.5 Z" fill="#fff" stroke="#3f4450" stroke-width="1.8" stroke-linejoin="round" /><path d="M447.4 50V61.5 M474.2 47.8V57.4" stroke="#8e939d" stroke-width="1.1"/><path d="M447.4 40 L456.6 33.8 L474.4 46.5 V48.8 L458.4 58.7 L447.4 52.3 Z" fill="#b9bec9" stroke="#545a66" stroke-width="1.3" stroke-linejoin="round" /><path d="M447.4 40 L456.6 33.8 L474.4 46.5 L458.4 56.4 L447.4 49.5 Z" fill="#d8dbe4" stroke="#545a66" stroke-width="1.2" stroke-linejoin="round" /><path d="M447.4 40 L451 42.5 L449.5 44.5 L447.4 43 Z" fill="#e8eaf0" stroke="#545a66" stroke-width="1" stroke-linejoin="round" /><path d="M458.4 56.4V68.3" stroke="#545a66" stroke-width="1.3"/><rect x="555.8" y="35.3" width="25.6" height="25" fill="#dde0e8" stroke="#4f5560" stroke-width="1.8"/><path d="M568.6 35.3V60.3 M555.8 48.5H581.4" stroke="#4f5560" stroke-width="1.5"/><rect x="552.2" y="61" width="31.8" height="4.3" fill="#1c2231"/><path d="M612.5 60V33.2 H625.5 V59.5" fill="none" stroke="#3d4350" stroke-width="1.8"/><path d="M614.4 40 L623.6 34.8 L625.8 59.4 L614.7 67.6 Z" fill="#d9dce5" stroke="#545a66" stroke-width="1.3" stroke-linejoin="round" /><path d="M615.5 54L618.5 52.5" stroke="#3d4350" stroke-width="1.3"/><path d="M651.3 33.5 L673.5 45.1 V69 L651.3 55.3 Z" fill="#d3d6df" stroke="#545a66" stroke-width="1.5" stroke-linejoin="round" /><path d="M651.3 33.5 L654 32.5 L675.5 44 L673.5 45.1 Z" fill="#9aa0aa" stroke="#545a66" stroke-width="1.0" stroke-linejoin="round" /><path d="M656.1 42.7 L665.3 47.8 V60.1 L656.1 55.3 Z" fill="#f2f3f6" stroke="#3f4450" stroke-width="1.8" stroke-linejoin="round" /><path d="M709.5 45.6 L722.5 36.3 L735.9 54 L722.9 63.3 Z" fill="#eef0f4" stroke="#545a66" stroke-width="1.5" stroke-linejoin="round" /><path d="M697.9 59.5 L709.5 45.6 L711.8 50.3 Z" fill="#7d8390" stroke="#545a66" stroke-width="1.3" stroke-linejoin="round" /><path d="M754 44.7 L767.5 36.3 L781.8 54 L767.9 63.7 Z" fill="#eef0f4" stroke="#545a66" stroke-width="1.5" stroke-linejoin="round" /><path d="M750.8 54.4 L754 44.7 L755.9 50.3 Z" fill="#eef0f4" stroke="#545a66" stroke-width="1.3" stroke-linejoin="round" /><path d="M763 46 L767.5 43.5 L772 46 V51 L767.5 53.5 L763 51 Z" fill="#cfd2da" stroke="#3f4450" stroke-width="1.5" stroke-linejoin="round" /><path d="M763 46 L767.5 48.5 L772 46 M767.5 48.5V53.5" fill="none" stroke="#3f4450" stroke-width="1.1"/><path d="M800.4 44.7 L813.8 36.3 L828.7 54 L814.3 64.2 Z" fill="#eef0f4" stroke="#545a66" stroke-width="1.5" stroke-linejoin="round" /><path d="M797.1 54.4 L800.4 44.7 L802.3 50.3 Z" fill="#eef0f4" stroke="#545a66" stroke-width="1.3" stroke-linejoin="round" /><rect x="810.6" y="47.5" width="6.5" height="8.3" fill="none" stroke="#b4b8c0" stroke-width="1.1"/><path d="M851.6 63.3 V49 L858 45" fill="none" stroke="#545a66" stroke-width="4.2"/><path d="M851.6 63.3 V49 L858 45" fill="none" stroke="#c9cdd6" stroke-width="1.8"/><path d="M855 39.5 L862.5 36.5 L865.3 40.5 L858 44.5 Z" fill="#79aedb" stroke="#4a6f93" stroke-width="1.2" stroke-linejoin="round" /><path d="M902 54.9 L913.2 48 L924.8 54.9 V59.1 L913.2 66.5 L902 59.1 Z" fill="#b9bec9" stroke="#545a66" stroke-width="1.3" stroke-linejoin="round" /><path d="M902 54.9 L913.2 48 L924.8 54.9 L913.2 61.9 Z" fill="#dfe2ea" stroke="#545a66" stroke-width="1.2" stroke-linejoin="round" /><path d="M907.6 41.9 L912.7 38.7 L917.8 41.9 V55 L912.7 58.2 L907.6 55 Z" fill="#eceef2" stroke="#545a66" stroke-width="1.3" stroke-linejoin="round" /><path d="M907.6 41.9 L912.7 45 L917.8 41.9 M912.7 45V58.2" fill="none" stroke="#545a66" stroke-width="1.1"/><path d="M942.9 54.9 L964.2 43.3 L975.8 48 V52.5 L954 66 L942.9 59.4 Z" fill="#b9bec9" stroke="#545a66" stroke-width="1.3" stroke-linejoin="round" /><path d="M942.9 54.9 L964.2 43.3 L975.8 48 L954 61 Z" fill="#dfe2ea" stroke="#545a66" stroke-width="1.2" stroke-linejoin="round" /><path d="M949.4 41.9 L964.2 31.7 L969.8 35.4 V49 L954 58.5 L949.4 55.5 Z" fill="#eceef2" stroke="#545a66" stroke-width="1.3" stroke-linejoin="round" /><path d="M949.4 41.9 L954 45.2 L969.8 35.4 M954 45.2V58.5" fill="none" stroke="#545a66" stroke-width="1.1"/><path d="M987.9 53.5 L1011 37.3 L1023.6 45.6 V49.8 L999.9 66 L987.9 57.7 Z" fill="#b9bec9" stroke="#545a66" stroke-width="1.4" stroke-linejoin="round" /><path d="M987.9 53.5 L1011 37.3 L1023.6 45.6 L999.9 61.9 Z" fill="#cdd1dc" stroke="#545a66" stroke-width="1.2" stroke-linejoin="round" /><path d="M999.9 61.9V66" stroke="#545a66" stroke-width="1.1"/><path d="M1052 35 L1071.5 62.5" stroke="#545a66" stroke-width="4.6" stroke-linecap="round"/><path d="M1052 35 L1071.5 62.5" stroke="#eceef3" stroke-width="2" stroke-linecap="round"/><path d="M1047.2 39.5 L1048.5 42.8 L1052 43 L1049.3 45.2 L1050.3 48.6 L1047.2 46.6 L1044.1 48.6 L1045.1 45.2 L1042.4 43 L1045.9 42.8 Z" fill="#ea4b2a"/><circle cx="1045.4" cy="54.9" r="1.8" fill="#f0902f"/><circle cx="1054.2" cy="52.6" r="2.2" fill="#f3a040"/><path d="M1104.55 67.13 L1104.55 58.03 L1112.95 57.33 L1112.95 51.93 L1121.35 51.23 L1121.35 45.83 L1129.75 45.13 L1131.20 48.40 Z" fill="#c3c7cf" stroke="#545a66" stroke-width="1.1" stroke-linejoin="round" /><path d="M1096.10 50.60 L1104.55 58.03 L1104.55 67.13 L1096.10 59.70 Z" fill="#878c97" stroke="#545a66" stroke-width="1.1" stroke-linejoin="round" /><path d="M1096.10 50.60 L1104.55 58.03 L1112.95 57.33 L1104.50 49.90 Z" fill="#eef0f4" stroke="#545a66" stroke-width="1.0" stroke-linejoin="round" /><path d="M1104.50 44.50 L1112.95 51.93 L1112.95 57.33 L1104.50 49.90 Z" fill="#878c97" stroke="#545a66" stroke-width="1.1" stroke-linejoin="round" /><path d="M1104.50 44.50 L1112.95 51.93 L1121.35 51.23 L1112.90 43.80 Z" fill="#eef0f4" stroke="#545a66" stroke-width="1.0" stroke-linejoin="round" /><path d="M1112.90 38.40 L1121.35 45.83 L1121.35 51.23 L1112.90 43.80 Z" fill="#878c97" stroke="#545a66" stroke-width="1.1" stroke-linejoin="round" /><path d="M1112.90 38.40 L1121.35 45.83 L1129.75 45.13 L1121.30 37.70 Z" fill="#eef0f4" stroke="#545a66" stroke-width="1.0" stroke-linejoin="round" /><path d="M1143.5 48.5 L1164.7 35.3 H1177.9 M1143.5 67.9 L1164.7 55.1 H1177.9" fill="none" stroke="#545a66" stroke-width="3.2" stroke-linejoin="round"/><path d="M1143.5 48.5 L1164.7 35.3 H1177.9 M1143.5 67.9 L1164.7 55.1 H1177.9" fill="none" stroke="#eef0f4" stroke-width="1.2" stroke-linejoin="round"/><path d="M1145.3 48V67 M1150 45V64 M1154.8 42V61 M1160.7 38.5V57.5 M1165.5 36V55 M1170.6 36V55 M1175.3 36V55" stroke="#545a66" stroke-width="1.4"/><rect x="1200.9" y="36" width="28" height="29.1" fill="#d2d6de"/><rect x="1209.4" y="50.7" width="20.2" height="15" fill="#f26a12"/><path d="M1211 36 H1200.9 V65.1 H1228.9 V36 H1219.3 M1200.9 50.5 H1228.9" fill="none" stroke="#222833" stroke-width="2"/><path d="M1248.4 44 L1257.2 39.8 L1266.2 44 L1257.2 48.3 Z" fill="#e8eaef" stroke="#8e94a0" stroke-width="1.1" stroke-linejoin="round" /><path d="M1248.4 40.2 L1257.2 36 L1266.2 40.2 L1257.2 44.5 Z" fill="#f0b43c" stroke="#9a7a30" stroke-width="1.1" stroke-linejoin="round" /><path d="M1248.4 36.6 L1257.2 32.4 L1266.2 36.6 L1257.2 40.9 Z" fill="#f6f7f9" stroke="#7e8490" stroke-width="1.2" stroke-linejoin="round" /><path d="M1306.3 38.5H1312L1309.2 41.7Z M1330.4 62.7H1336L1333.2 65.8Z" fill="#1a1a1a"/><path d="M1248.4 61.7 L1257.2 57.8 L1266.2 61.7 V65.5 L1257.2 70.5 L1248.4 65.5 Z" fill="#b5bac4" stroke="#666c78" stroke-width="1.2" stroke-linejoin="round" /><path d="M1248.4 61.7 L1257.2 57.8 L1266.2 61.7 L1257.2 66.1 Z" fill="#eceef2" stroke="#666c78" stroke-width="1.2" stroke-linejoin="round" /><path d="M1366.5 36V67.2" stroke="#3a3f4b" stroke-width="1.6"/><path d="M1368 36.1 L1377 44.2 L1368 52.3Z" fill="#1e2536"/><rect x="1422.5" y="33.7" width="15.5" height="14.6" rx="1.5" fill="#f2f3f6" stroke="#4f5562" stroke-width="1.5"/><rect x="1414.1" y="45.9" width="33.1" height="13.2" rx="2.5" fill="#cdd1db" stroke="#4f5562" stroke-width="1.6"/><path d="M1414.6 51.6H1446.7" stroke="#4f5562" stroke-width="1.3"/><path d="M1423 56.4 H1438.2 L1437.5 66.3 H1423.7 Z" fill="#f2f3f6" stroke="#4f5562" stroke-width="1.3"/><path d="M1425.6 56.8 H1435.9 L1435.3 64.8 H1426.2 Z" fill="#1c2336"/><path d="M1470.1 31.1 l3.7 3.7 l-3.7 3.7 l-3.7 -3.7Z" fill="#1e2433"/><path d="M1464.7 36.5 l3.7 3.7 l-3.7 3.7 l-3.7 -3.7Z" fill="#1e2433"/><path d="M1475.5 36.5 l3.7 3.7 l-3.7 3.7 l-3.7 -3.7Z" fill="#1e2433"/><path d="M1470.1 41.9 l3.7 3.7 l-3.7 3.7 l-3.7 -3.7Z" fill="#1e2433"/><circle cx="1470.1" cy="40.2" r="2" fill="#f4f6fa"/><rect x="1461.5" y="60.8" width="16.8" height="7" fill="#f2f3f6" stroke="#7d828c" stroke-width="1.6"/><path d="M1465 61V63.5 M1468 61V64.5 M1471 61V63.5 M1474 61V64.5" stroke="#7d828c" stroke-width="1"/><path d="M1459.8 91.5 L1469 87.0 L1478.3 91.5 L1469 96.0 Z" fill="#eceef1" stroke="#c7cad0" stroke-width="1.1" stroke-linejoin="round" /><path d="M1459.8 88.5 L1469 84.0 L1478.3 88.5 L1469 93.0 Z" fill="#eceef1" stroke="#c7cad0" stroke-width="1.1" stroke-linejoin="round" /><path d="M1459.8 85.0 L1469 80.5 L1478.3 85.0 L1469 89.5 Z" fill="#eceef1" stroke="#c7cad0" stroke-width="1.1" stroke-linejoin="round" /><rect x="1584.2" y="33.4" width="13.5" height="13.2" fill="#f4f5f8" stroke="#5a5f6a" stroke-width="1.5"/><path d="M1590.9 35.5l1.6 2h-3.2Z M1590.9 44.5l1.6 -2h-3.2Z M1586.3 40l2 -1.6v3.2Z M1595.6 40l-2 -1.6v3.2Z" fill="#1e2433"/><circle cx="1590.9" cy="40" r="1" fill="#1e2433"/><path d="M1587 37V38 M1594.8 37V38 M1587 42.5V43.5 M1594.8 42.5V43.5" stroke="#1e2433" stroke-width="1.4"/><rect x="1584" y="61.1" width="11.5" height="6.8" rx="1.5" fill="#e6e9f0" stroke="#1e2433" stroke-width="1.8"/><path d="M1589.7 56.5l2.8 3h-5.6Z M1589.7 72.5l2.8 -3h-5.6Z M1581 64.5l3 -2.8v5.6Z M1598.5 64.5l-3 -2.8v5.6Z" fill="#1e2433"/><path d="M1583 71.5 L1598 72" stroke="#9aa0b8" stroke-width="0.8" stroke-dasharray="1.5 1.5"/><path d="M1590.9 96.5 C1587 91 1584.4 88.5 1584.4 85.6 A6.5 6.5 0 0 1 1597.4 85.6 C1597.4 88.5 1594.8 91 1590.9 96.5Z" fill="#ef6a1e"/><circle cx="1590.9" cy="85.6" r="2.4" fill="#fff"/><path d="M1580.4 84V98" stroke="#4e535e" stroke-width="1.2" stroke-dasharray="1.6 1.8"/></svg>
<svg class="abs" style="left:0;top:0" width="2048" height="25"><path d="M1883 19 L1898 5" stroke="#1b2436" stroke-width="3.2" stroke-linecap="round"/><path d="M1885 6 L1898 19" stroke="#f3a53a" stroke-width="3.4" stroke-linecap="round"/><circle cx="1885" cy="6.5" r="3" fill="none" stroke="#f3a53a" stroke-width="2"/><rect x="1910" y="5" width="2.6" height="12.5" fill="#1b2436"/><rect x="1914" y="5" width="10" height="2.6" fill="#1b2436"/><rect x="1914.5" y="9.5" width="9.5" height="9" fill="#f59a1e"/><rect x="1938" y="4.5" width="13" height="2.5" fill="#1b2436"/><rect x="1934" y="8.5" width="13" height="2.5" fill="#1b2436"/><rect x="1934" y="12" width="10" height="6" fill="#f59a1e"/><rect x="1946.5" y="9" width="3" height="4" fill="#f59a1e"/><circle cx="1967.5" cy="11.5" r="9" fill="#12233f"/><text x="1967.5" y="16.5" font-size="14" font-weight="700" fill="#4d8fe0" text-anchor="middle">?</text><rect x="1983.3" y="2.4" width="18.8" height="19.6" fill="#ffffff"/><rect x="2006.2" y="2.4" width="18.8" height="19.6" fill="#ffffff"/><rect x="2029.4" y="2.4" width="18.8" height="19.6" fill="#ffffff"/><path d="M1989.8 14.5H1996" stroke="#333" stroke-width="1.5"/><path d="M2013 10.5h5v4h-5z M2014.5 9v-1.5h5v4h-1.5" fill="none" stroke="#333" stroke-width="1"/><path d="M2036.5 9L2041 13.5 M2041 9L2036.5 13.5" stroke="#333" stroke-width="1.5"/></svg>
<svg class="abs" style="left:0;top:1000px" width="2048" height="66" viewBox="0 1000 2048 66"><defs><pattern id="hat" width="3.2" height="3.2" patternUnits="userSpaceOnUse" patternTransform="rotate(45)"><rect width="3.2" height="3.2" fill="#4a505c"/><rect width="1.3" height="3.2" fill="#e8eaee"/></pattern></defs><path d="M745.8 1017 H757.3 V1025.3 H764 V1033.4 H745.8 Z" fill="url(#hat)" stroke="#3a404c" stroke-width="1.8" stroke-linejoin="round"/><path d="M779.6 1017.6 H789 L795 1020.5 V1023 H779.6 Z" fill="#e6e9f0" stroke="#555c68" stroke-width="1.4"/><path d="M779.4 1027 H788 Q795.8 1028.5 795.8 1033.3 H779.4 Z" fill="#e26a1e"/><path d="M814 1018H831 M814 1023.2H831 M814 1029.8H831" stroke="#1d2232" stroke-width="0" /><rect x="814" y="1016.6" width="17" height="2.8" rx="1" fill="#1d2232"/><rect x="814" y="1021.3" width="17" height="3.6" rx="1" fill="#1d2232"/><rect x="814" y="1027" width="17" height="4.6" rx="1" fill="#1d2232"/><path d="M844.4 1018H862" stroke="#4c5260" stroke-width="1.6"/><path d="M844.4 1024.1H862" stroke="#4c5260" stroke-width="1.8" stroke-dasharray="5 3.2"/><path d="M844.8 1030.6H862" stroke="#4c5260" stroke-width="1.9" stroke-dasharray="1.8 3.2"/><text x="876" y="1028" font-size="7" font-weight="700" fill="#3a404c" textLength="19" lengthAdjust="spacingAndGlyphs">ROOM</text><path d="M889 1018H897.5 M874.5 1033.3H881" stroke="#3a404c" stroke-width="1.2"/><path d="M898 1018l-2 -1.5v3z" fill="#3a404c"/><text x="907.6" y="1030.3" font-size="11.5" font-weight="700" fill="#2a3040" textLength="21.2" lengthAdjust="spacingAndGlyphs">Abc</text><path d="M939.6 1022.4V1032.7 M962.5 1022.4V1032.7 M940 1027.9H962" stroke="#333" stroke-width="1.4"/><path d="M940 1027.9l4 -2.5v5z M962 1027.9l-4 -2.5v5z" fill="#333"/><text x="946.2" y="1023.2" font-size="8" fill="#333" textLength="9.6" lengthAdjust="spacingAndGlyphs">1,2</text><rect x="975" y="1017.3" width="20" height="17" fill="none" stroke="#3a404c" stroke-width="1.2"/><path d="M985 1017.3V1034.3 M975 1025.8H995" stroke="#8d93a0" stroke-width="0.7"/><circle cx="977.7" cy="1017.3" r="1.3" fill="#2a3040"/><circle cx="984.9" cy="1017.3" r="1.3" fill="#2a3040"/><circle cx="991.4" cy="1017.3" r="1.3" fill="#2a3040"/><circle cx="977.7" cy="1034.3" r="1.3" fill="#2a3040"/><circle cx="984.9" cy="1034.3" r="1.3" fill="#2a3040"/><circle cx="991.4" cy="1034.3" r="1.3" fill="#2a3040"/><circle cx="975.0" cy="1021.0" r="1.3" fill="#2a3040"/><circle cx="975.0" cy="1026.0" r="1.3" fill="#2a3040"/><circle cx="975.0" cy="1030.0" r="1.3" fill="#2a3040"/><circle cx="995.0" cy="1021.0" r="1.3" fill="#2a3040"/><circle cx="995.0" cy="1026.0" r="1.3" fill="#2a3040"/><circle cx="995.0" cy="1030.0" r="1.3" fill="#2a3040"/><rect x="1009.6" y="1017.6" width="15" height="14.4" fill="none" stroke="#3a404c" stroke-width="1.5" stroke-dasharray="2.6 1.6"/><rect x="1043.5" y="1015.4" width="14" height="13" fill="#fff" stroke="#9aa2b0" stroke-width="1"/><rect x="1040.2" y="1018.5" width="12.5" height="12.5" fill="#7c8aa4"/><rect x="1047" y="1028" width="10" height="6" fill="#2e8a6a"/><circle cx="1053.5" cy="1027" r="4" fill="#f0a030"/><path d="M1079 1022.5 L1087.5 1017.5 L1094.7 1027 L1087 1033 Z" fill="#e4e8f0" stroke="#4e5562" stroke-width="1.3"/><path d="M1071.8 1031 L1079 1022.5 L1080.5 1025.5Z" fill="#4e5562" stroke="#4e5562" stroke-width="1.2"/><path d="M1104.5 1026 L1117 1018 L1127 1022 L1114.5 1030 Z" fill="#c6cad3" stroke="#5e6470" stroke-width="1.2"/><path d="M1106 1021 L1113 1017 L1127 1027 L1120 1031.5 Z" fill="#aeb3bd" stroke="#5e6470" stroke-width="1.2"/><path d="M1137.8 1025 L1150 1015.6 L1160 1023 V1025.5 L1148 1034 L1137.8 1027.2 Z" fill="#9ea5b1" stroke="#555c68" stroke-width="1.2"/><path d="M1137.8 1025 L1150 1015.6 L1160 1023 L1148 1031.5 Z" fill="#c2c8d2" stroke="#555c68" stroke-width="1.1"/><circle cx="1182" cy="1024.8" r="8.6" fill="#eef2f8" stroke="#4e5562" stroke-width="1.4"/><text x="1182" y="1029.3" font-size="11" font-weight="700" fill="#1e2433" text-anchor="middle">N</text><path d="M1219 1019.5H1224 M1219 1030H1224 M1221.5 1019.5V1030" stroke="#1e2433" stroke-width="2"/><path d="M1219 1024.8 l2.5 -2 l2.5 2 l-2.5 2z" fill="#1e2433"/><rect x="1256" y="1022" width="17" height="8.2" fill="#f0f2f6" stroke="#3a404c" stroke-width="1.6"/><path d="M1259 1030V1027.5 M1262 1030V1026.5 M1265 1030V1027.5 M1268 1030V1026.5 M1271 1030V1027.5" stroke="#3a404c" stroke-width="0.9"/><rect x="1288" y="1017" width="16.5" height="18.5" fill="#e8ecf3" stroke="#3a404c" stroke-width="1.6"/><path d="M1290.8 1017V1035.5 M1288 1032.5H1304.5" stroke="#3a404c" stroke-width="1"/><rect x="1320.8" y="1017" width="16.5" height="18.5" fill="#e8ecf3" stroke="#3a404c" stroke-width="1.6"/><path d="M1329 1017V1035.5 M1320.8 1026.2H1337.3 M1323.5 1017V1035.5" stroke="#3a404c" stroke-width="1.3"/><rect x="1353" y="1017" width="16" height="16" fill="none" stroke="#5a606c" stroke-width="1" stroke-dasharray="2 1.5"/><path d="M1356 1024 L1361 1019.5 M1356 1024 L1361 1028.5 M1356 1024 H1363 Q1367 1024 1367 1028 V1033" fill="none" stroke="#3a404c" stroke-width="1.5"/><rect x="1385.5" y="1016.2" width="16.2" height="17.5" fill="#fff" stroke="#6a707c" stroke-width="1.6"/><circle cx="1393.6" cy="1025" r="3" fill="#f07a2a"/><path d="M1397 1019.5 h3 v3" fill="none" stroke="#6ab06a" stroke-width="1"/><rect x="1418.3" y="1016.3" width="16.6" height="17.5" fill="#fff" stroke="#6a707c" stroke-width="1.6"/><path d="M1423.2 1021V1028.5H1430.5" fill="none" stroke="#1e2433" stroke-width="1.5"/><path d="M1423.2 1019.5l-1.8 2.5h3.6z M1432 1028.5l-2.5 -1.8v3.6z" fill="#1e2433"/><rect x="1452.5" y="1016.3" width="16.1" height="17.5" fill="#fff" stroke="#6a707c" stroke-width="1.6"/><circle cx="1460.3" cy="1024.6" r="2.6" fill="#e8731e"/><path d="M1460.3 1019V1030.2 M1454.7 1024.6H1465.9 M1456.4 1020.7L1464.2 1028.5 M1464.2 1020.7L1456.4 1028.5" stroke="#f4a060" stroke-width="0.8"/><path d="M1484 1017V1033 M1492.5 1017V1033 M1501 1017V1033 M1484 1017H1501 M1484 1025H1501 M1484 1033H1501" stroke="#3a404c" stroke-width="1"/><rect x="1489.5" y="1021.5" width="6" height="7" rx="1" fill="#f4c7a8" stroke="#e07a3a" stroke-width="1"/><path d="M1517 1017V1033 M1521 1017V1033 M1525 1017V1033 M1529 1017V1033 M1533 1017V1033 M1516 1019H1535 M1516 1023H1535 M1516 1027H1535 M1516 1031H1535" stroke="#4a505c" stroke-width="1"/><path d="M1550 1019.5h2.5v2 M1555.5 1018.5H1562 M1566 1019V1026 M1565 1031.5V1029h2.5" fill="none" stroke="#3a404c" stroke-width="1.5"/><path d="M1556 1018.5H1562" stroke="#f2b080" stroke-width="1"/><path d="M1585 1020.5 L1593.5 1028 L1590 1028.5 L1592 1033.5 L1589.5 1034.3 L1587.7 1029.8 L1585 1032Z" fill="#9aa0ac" stroke="#5a606c" stroke-width="0.9"/><rect x="1592.8" y="1015.5" width="9" height="10.3" fill="#fff" stroke="#5a606c" stroke-width="1.3"/><path d="M1595.3 1018.5L1599.3 1022.8 M1599.3 1018.5L1595.3 1022.8" stroke="#1e2433" stroke-width="1.5"/></svg>
</body></html>
